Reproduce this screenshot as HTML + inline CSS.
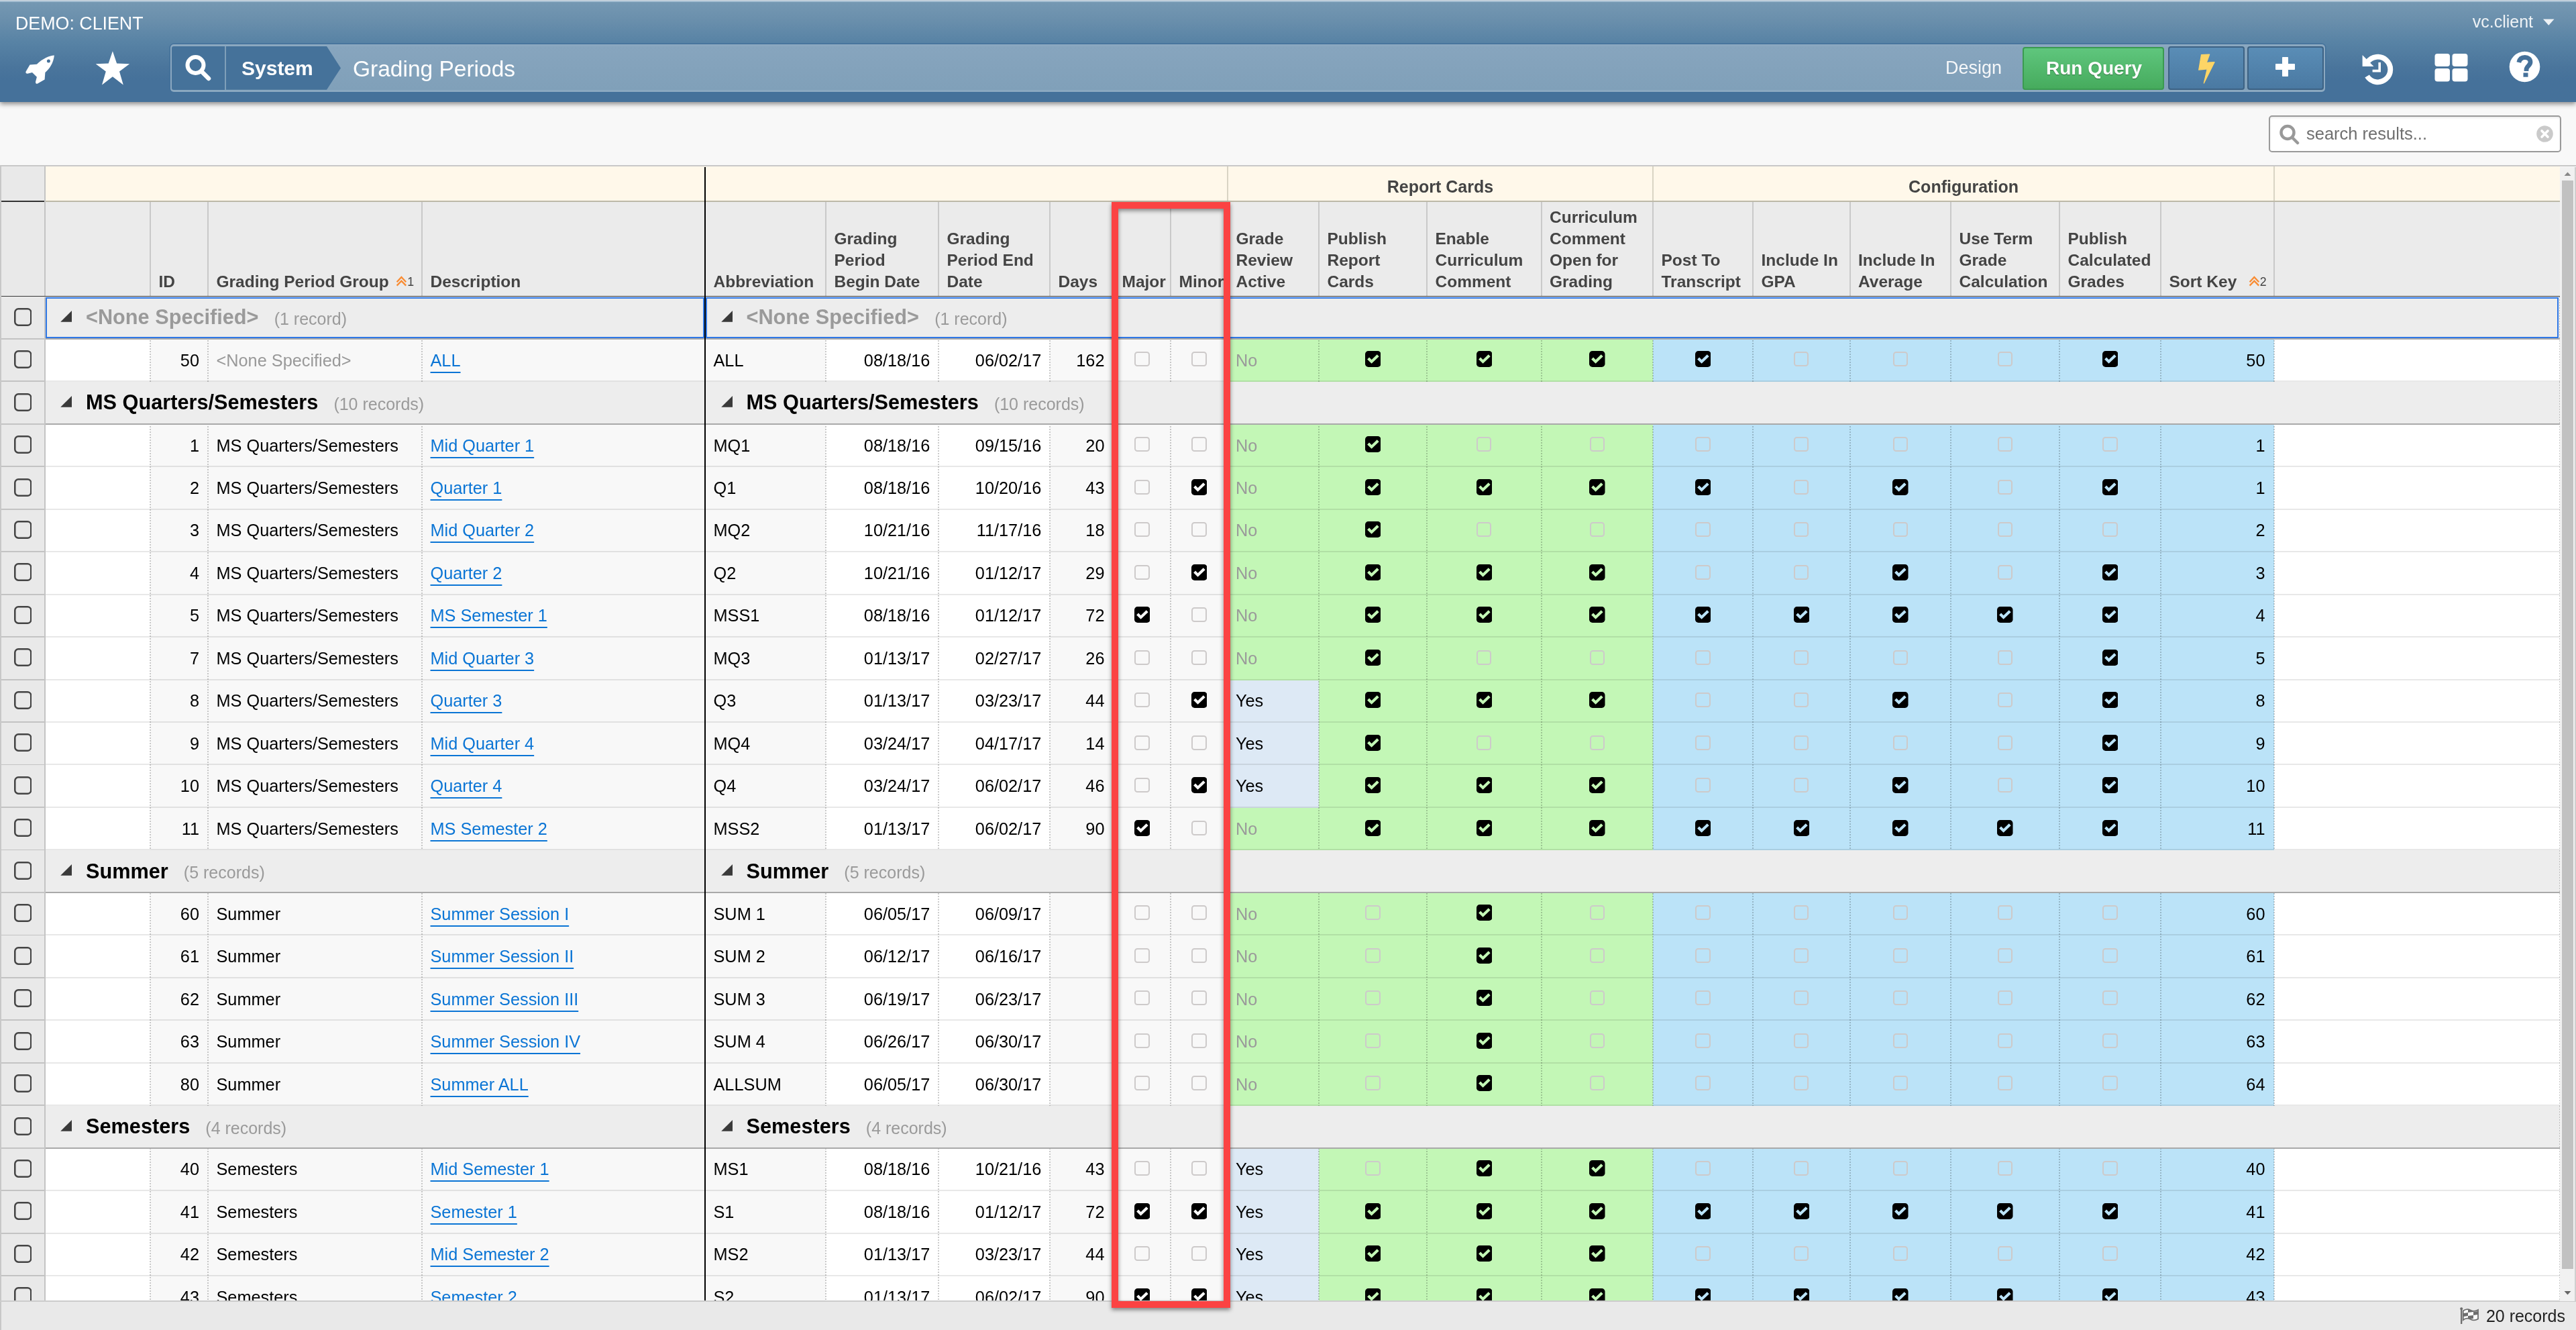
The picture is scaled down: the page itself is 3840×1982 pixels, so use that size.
<!DOCTYPE html>
<html><head><meta charset="utf-8"><style>
html,body{margin:0;padding:0;}
body{width:3840px;height:1982px;overflow:hidden;position:relative;background:#f8f8f8;font-family:"Liberation Sans", sans-serif;-webkit-font-smoothing:antialiased;}
#root{position:absolute;left:0;top:0;width:3840px;height:1982px;will-change:transform;}
</style></head><body><div id="root">
<div style="position:absolute;left:0;top:0;width:3840px;height:152px;background:linear-gradient(#7699b3 0px,#6a8fac 30px,#5883a5 62px,#4a759c 100px,#45719a 120px,#45719a 152px);box-shadow:0 3px 7px rgba(0,0,0,0.45);"></div>
<div style="position:absolute;left:0px;top:0px;width:3840px;height:1.4px;background:#d3dae1;"></div>
<div style="position:absolute;left:0px;top:1.4px;width:3840px;height:1.8px;background:#a6bed2;"></div>
<div style="position:absolute;left:23px;top:22.21px;font-size:26.8px;line-height:26.8px;font-weight:normal;color:#ffffff;white-space:nowrap;">DEMO: CLIENT</div>
<div style="position:absolute;left:2776px;width:1000px;text-align:right;top:20.44px;font-size:25px;line-height:25px;font-weight:normal;color:#eef2f5;white-space:nowrap;">vc.client</div>
<svg style="position:absolute;left:3791px;top:28px" width="17" height="11"><polygon points="0,0.5 16.5,0.5 8.25,9.8" fill="#eef2f5"/></svg>
<svg style="position:absolute;left:36px;top:80px" width="48" height="48" viewBox="0 0 48 48">
<path fill="#fff" d="M44.9 2.5 C38 2.9 27.5 7.2 18.9 15.7 L8.5 16.5 L2.5 26.8 Q1.8 29.6 5 29.7 L12 28.1 L18.9 34.7 L17 42 Q17 45.2 19.7 44.8 L30.6 38.6 L31.4 28.1 C38 22.5 43.8 13.5 44.9 2.5 Z"/>
<circle cx="36.4" cy="11.1" r="2.5" fill="#45719a"/>
</svg>
<svg style="position:absolute;left:141px;top:75px" width="54" height="53" viewBox="0 0 54 53"><polygon fill="#fff" points="26.9,1.3 33.1,19.5 52.1,20.3 37,31.6 42.8,51.4 26.9,39.3 11,51.4 16.8,31.6 1.7,20.3 20.7,19.5"/></svg>
<div style="position:absolute;left:254px;top:66px;width:3212px;height:71px;border-radius:5px;background:#8ba8c0;box-shadow:0 0 0 1.4px #42709a;"></div>
<div style="position:absolute;left:256px;top:69px;width:3208px;height:65px;border-radius:3px;background:linear-gradient(#87a5be,#80a0b9);"></div>
<div style="position:absolute;left:256px;top:69px;width:79px;height:64.75px;border-radius:3px 0 0 3px;background:#45729a;"></div>
<div style="position:absolute;left:335px;top:69px;width:2px;height:64.75px;background:#7f9fb9;"></div>
<svg style="position:absolute;left:337px;top:69px" width="172" height="65"><polygon points="0,0 150,0 171,32.4 150,64.75 0,64.75" fill="#45729a"/></svg>
<svg style="position:absolute;left:274px;top:80px" width="44" height="44" viewBox="0 0 44 44"><circle cx="17.5" cy="17" r="12" fill="none" stroke="#fff" stroke-width="6"/><line x1="27" y1="27" x2="37" y2="37" stroke="#fff" stroke-width="6.5" stroke-linecap="round"/></svg>
<div style="position:absolute;left:360px;top:87.01px;font-size:30px;line-height:30px;font-weight:bold;color:#fff;white-space:nowrap;">System</div>
<div style="position:absolute;left:526px;top:86.44px;font-size:33.5px;line-height:33.5px;font-weight:normal;color:#fff;white-space:nowrap;">Grading Periods</div>
<div style="position:absolute;left:2900px;top:88.14px;font-size:27px;line-height:27px;font-weight:normal;color:#f5f7f9;white-space:nowrap;">Design</div>
<div style="position:absolute;left:3015px;top:69.5px;width:207px;height:60px;border:2px solid #3a9a50;border-radius:4px;background:linear-gradient(#5fc67d,#46ab5d);"></div>
<div style="position:absolute;left:3050px;top:87.90px;font-size:28px;line-height:28px;font-weight:bold;color:#fff;white-space:nowrap;text-shadow:0 1px 1px rgba(0,0,0,0.35);">Run Query</div>
<div style="position:absolute;left:3232px;top:69px;width:110px;height:60.5px;border:2px solid #3d6284;border-radius:4px;background:linear-gradient(#5a8db6,#4a79a2);"></div>
<div style="position:absolute;left:3350px;top:69px;width:110px;height:60.5px;border:2px solid #3d6284;border-radius:4px;background:linear-gradient(#5a8db6,#4a79a2);"></div>
<svg style="position:absolute;left:3275px;top:79px" width="28" height="46" viewBox="0 0 28 46"><polygon fill="#fdd566" stroke="#fdd566" stroke-width="1.2" stroke-linejoin="round" points="6.5,2.6 18.7,2.1 14.3,14.3 26.1,13.5 10.3,45 15.2,23.8 2.7,25.1"/></svg>
<svg style="position:absolute;left:3391px;top:84px" width="31" height="31" viewBox="0 0 31 31"><path fill="#fff" d="M11.5 1.5h8v10h10v8h-10v10h-8v-10h-10v-8h10z" stroke="#fff" stroke-width="1" stroke-linejoin="round"/></svg>
<svg style="position:absolute;left:3519px;top:78px" width="50" height="50" viewBox="0 0 50 50">
<path d="M10 14.8 A18.8 18.8 0 1 1 9.6 35.5" fill="none" stroke="#fff" stroke-width="7.8"/>
<polygon fill="#fff" points="2.6,4 2.6,21 19.5,21"/>
<path d="M28.2 15 V27.6 H17.6" fill="none" stroke="#fff" stroke-width="3.6"/>
</svg>
<svg style="position:absolute;left:3629px;top:80px" width="50" height="42" viewBox="0 0 50 42"><rect x="0.5" y="0" width="22.5" height="19" rx="4" fill="#fff"/><rect x="26.5" y="0" width="23" height="19" rx="4" fill="#fff"/><rect x="0.5" y="22" width="22.5" height="19.5" rx="4" fill="#fff"/><rect x="26.5" y="22" width="23" height="19.5" rx="4" fill="#fff"/></svg>
<svg style="position:absolute;left:3740px;top:76px" width="47" height="47" viewBox="0 0 47 47">
<circle cx="23.5" cy="23.5" r="22.8" fill="#fff"/>
<path d="M14.8 17 C16 11.5 19.5 9.5 23.8 9.5 C28.5 9.5 32 12.2 32 16.5 C32 21.5 26.2 22.5 26 27.5 V30" fill="none" stroke="#45719a" stroke-width="6.8"/>
<rect x="21.5" y="32.5" width="7" height="6.2" fill="#45719a"/>
</svg>
<div style="position:absolute;left:3381.5px;top:171.5px;width:432px;height:51px;border:2px solid #9a9a9a;border-radius:5px;background:#fff;box-shadow:inset 0 2px 3px rgba(0,0,0,0.08);"></div>
<svg style="position:absolute;left:3396px;top:184px" width="34" height="32" viewBox="0 0 34 32"><circle cx="14" cy="13.5" r="9.5" fill="none" stroke="#999" stroke-width="4.5"/><line x1="21" y1="21" x2="29" y2="29" stroke="#999" stroke-width="4.5" stroke-linecap="round"/></svg>
<div style="position:absolute;left:3438px;top:187.41px;font-size:25.5px;line-height:25.5px;font-weight:normal;color:#6f6f6f;white-space:nowrap;">search results...</div>
<svg style="position:absolute;left:3780px;top:186px" width="27" height="27" viewBox="0 0 27 27"><circle cx="13.5" cy="13.5" r="12.3" fill="#cacaca"/><path d="M9 9 L18 18 M18 9 L9 18" stroke="#fff" stroke-width="3.6" stroke-linecap="round"/></svg>
<div style="position:absolute;left:0px;top:245.9px;width:3840px;height:2px;background:#c8c8c8;"></div>
<div style="position:absolute;left:67px;top:247.9px;width:3749px;height:51px;background:#fff8ea;"></div>
<div style="position:absolute;left:0px;top:247.9px;width:67px;height:51px;background:#e9e9e9;"></div>
<div style="position:absolute;left:67px;top:298.7px;width:3749px;height:2px;background:#bdb9a8;"></div>
<div style="position:absolute;left:0px;top:298.7px;width:67px;height:2.2px;background:#333;"></div>
<div style="position:absolute;left:1829px;top:247.9px;width:2px;height:51px;background:#d9d4c4;"></div>
<div style="position:absolute;left:2463px;top:247.9px;width:2px;height:51px;background:#d9d4c4;"></div>
<div style="position:absolute;left:3389px;top:247.9px;width:2px;height:51px;background:#d9d4c4;"></div>
<div style="position:absolute;left:1147px;width:2000px;text-align:center;top:265.84px;font-size:25px;line-height:25px;font-weight:bold;color:#444;white-space:nowrap;">Report Cards</div>
<div style="position:absolute;left:1927px;width:2000px;text-align:center;top:265.84px;font-size:25px;line-height:25px;font-weight:bold;color:#444;white-space:nowrap;">Configuration</div>
<div style="position:absolute;left:0px;top:300.7px;width:3816px;height:140.3px;background:#ebebeb;"></div>
<div style="position:absolute;left:0px;top:300.7px;width:67px;height:140.3px;background:#e9e9e9;"></div>
<div style="position:absolute;left:66px;top:300.7px;width:2px;height:140.3px;background:#c9c9c9;"></div>
<div style="position:absolute;left:223px;top:300.7px;width:2px;height:140.3px;background:#c9c9c9;"></div>
<div style="position:absolute;left:309px;top:300.7px;width:2px;height:140.3px;background:#c9c9c9;"></div>
<div style="position:absolute;left:628px;top:300.7px;width:2px;height:140.3px;background:#c9c9c9;"></div>
<div style="position:absolute;left:1230px;top:300.7px;width:2px;height:140.3px;background:#c9c9c9;"></div>
<div style="position:absolute;left:1398px;top:300.7px;width:2px;height:140.3px;background:#c9c9c9;"></div>
<div style="position:absolute;left:1564px;top:300.7px;width:2px;height:140.3px;background:#c9c9c9;"></div>
<div style="position:absolute;left:1659px;top:300.7px;width:2px;height:140.3px;background:#c9c9c9;"></div>
<div style="position:absolute;left:1744px;top:300.7px;width:2px;height:140.3px;background:#c9c9c9;"></div>
<div style="position:absolute;left:1829px;top:300.7px;width:2px;height:140.3px;background:#c9c9c9;"></div>
<div style="position:absolute;left:1965px;top:300.7px;width:2px;height:140.3px;background:#c9c9c9;"></div>
<div style="position:absolute;left:2126px;top:300.7px;width:2px;height:140.3px;background:#c9c9c9;"></div>
<div style="position:absolute;left:2296.5px;top:300.7px;width:2px;height:140.3px;background:#c9c9c9;"></div>
<div style="position:absolute;left:2463px;top:300.7px;width:2px;height:140.3px;background:#c9c9c9;"></div>
<div style="position:absolute;left:2612px;top:300.7px;width:2px;height:140.3px;background:#c9c9c9;"></div>
<div style="position:absolute;left:2756.5px;top:300.7px;width:2px;height:140.3px;background:#c9c9c9;"></div>
<div style="position:absolute;left:2907px;top:300.7px;width:2px;height:140.3px;background:#c9c9c9;"></div>
<div style="position:absolute;left:3069px;top:300.7px;width:2px;height:140.3px;background:#c9c9c9;"></div>
<div style="position:absolute;left:3220px;top:300.7px;width:2px;height:140.3px;background:#c9c9c9;"></div>
<div style="position:absolute;left:3389px;top:300.7px;width:2px;height:140.3px;background:#c9c9c9;"></div>
<div style="position:absolute;left:0px;top:440.8px;width:3816px;height:2.4px;background:#383838;"></div>
<div style="position:absolute;left:66.25px;top:247.9px;width:1.75px;height:193px;background:#c4c4c4;"></div>
<div style="position:absolute;left:236.5px;top:407.56px;font-size:24.5px;line-height:24.5px;font-weight:bold;color:#444;white-space:nowrap;">ID</div>
<div style="position:absolute;left:322.5px;top:407.56px;font-size:24.5px;line-height:24.5px;font-weight:bold;color:#444;white-space:nowrap;">Grading Period Group</div>
<div style="position:absolute;left:641.5px;top:407.56px;font-size:24.5px;line-height:24.5px;font-weight:bold;color:#444;white-space:nowrap;">Description</div>
<div style="position:absolute;left:1063.5px;top:407.56px;font-size:24.5px;line-height:24.5px;font-weight:bold;color:#444;white-space:nowrap;">Abbreviation</div>
<div style="position:absolute;left:1243.5px;top:343.96px;font-size:24.5px;line-height:24.5px;font-weight:bold;color:#444;white-space:nowrap;">Grading</div>
<div style="position:absolute;left:1243.5px;top:375.76px;font-size:24.5px;line-height:24.5px;font-weight:bold;color:#444;white-space:nowrap;">Period</div>
<div style="position:absolute;left:1243.5px;top:407.56px;font-size:24.5px;line-height:24.5px;font-weight:bold;color:#444;white-space:nowrap;">Begin Date</div>
<div style="position:absolute;left:1411.5px;top:343.96px;font-size:24.5px;line-height:24.5px;font-weight:bold;color:#444;white-space:nowrap;">Grading</div>
<div style="position:absolute;left:1411.5px;top:375.76px;font-size:24.5px;line-height:24.5px;font-weight:bold;color:#444;white-space:nowrap;">Period End</div>
<div style="position:absolute;left:1411.5px;top:407.56px;font-size:24.5px;line-height:24.5px;font-weight:bold;color:#444;white-space:nowrap;">Date</div>
<div style="position:absolute;left:1577.5px;top:407.56px;font-size:24.5px;line-height:24.5px;font-weight:bold;color:#444;white-space:nowrap;">Days</div>
<div style="position:absolute;left:1672.5px;top:407.56px;font-size:24.5px;line-height:24.5px;font-weight:bold;color:#444;white-space:nowrap;">Major</div>
<div style="position:absolute;left:1757.5px;top:407.56px;font-size:24.5px;line-height:24.5px;font-weight:bold;color:#444;white-space:nowrap;">Minor</div>
<div style="position:absolute;left:1842.5px;top:343.96px;font-size:24.5px;line-height:24.5px;font-weight:bold;color:#444;white-space:nowrap;">Grade</div>
<div style="position:absolute;left:1842.5px;top:375.76px;font-size:24.5px;line-height:24.5px;font-weight:bold;color:#444;white-space:nowrap;">Review</div>
<div style="position:absolute;left:1842.5px;top:407.56px;font-size:24.5px;line-height:24.5px;font-weight:bold;color:#444;white-space:nowrap;">Active</div>
<div style="position:absolute;left:1978.5px;top:343.96px;font-size:24.5px;line-height:24.5px;font-weight:bold;color:#444;white-space:nowrap;">Publish</div>
<div style="position:absolute;left:1978.5px;top:375.76px;font-size:24.5px;line-height:24.5px;font-weight:bold;color:#444;white-space:nowrap;">Report</div>
<div style="position:absolute;left:1978.5px;top:407.56px;font-size:24.5px;line-height:24.5px;font-weight:bold;color:#444;white-space:nowrap;">Cards</div>
<div style="position:absolute;left:2139.5px;top:343.96px;font-size:24.5px;line-height:24.5px;font-weight:bold;color:#444;white-space:nowrap;">Enable</div>
<div style="position:absolute;left:2139.5px;top:375.76px;font-size:24.5px;line-height:24.5px;font-weight:bold;color:#444;white-space:nowrap;">Curriculum</div>
<div style="position:absolute;left:2139.5px;top:407.56px;font-size:24.5px;line-height:24.5px;font-weight:bold;color:#444;white-space:nowrap;">Comment</div>
<div style="position:absolute;left:2310.0px;top:312.16px;font-size:24.5px;line-height:24.5px;font-weight:bold;color:#444;white-space:nowrap;">Curriculum</div>
<div style="position:absolute;left:2310.0px;top:343.96px;font-size:24.5px;line-height:24.5px;font-weight:bold;color:#444;white-space:nowrap;">Comment</div>
<div style="position:absolute;left:2310.0px;top:375.76px;font-size:24.5px;line-height:24.5px;font-weight:bold;color:#444;white-space:nowrap;">Open for</div>
<div style="position:absolute;left:2310.0px;top:407.56px;font-size:24.5px;line-height:24.5px;font-weight:bold;color:#444;white-space:nowrap;">Grading</div>
<div style="position:absolute;left:2476.5px;top:375.76px;font-size:24.5px;line-height:24.5px;font-weight:bold;color:#444;white-space:nowrap;">Post To</div>
<div style="position:absolute;left:2476.5px;top:407.56px;font-size:24.5px;line-height:24.5px;font-weight:bold;color:#444;white-space:nowrap;">Transcript</div>
<div style="position:absolute;left:2625.5px;top:375.76px;font-size:24.5px;line-height:24.5px;font-weight:bold;color:#444;white-space:nowrap;">Include In</div>
<div style="position:absolute;left:2625.5px;top:407.56px;font-size:24.5px;line-height:24.5px;font-weight:bold;color:#444;white-space:nowrap;">GPA</div>
<div style="position:absolute;left:2770.0px;top:375.76px;font-size:24.5px;line-height:24.5px;font-weight:bold;color:#444;white-space:nowrap;">Include In</div>
<div style="position:absolute;left:2770.0px;top:407.56px;font-size:24.5px;line-height:24.5px;font-weight:bold;color:#444;white-space:nowrap;">Average</div>
<div style="position:absolute;left:2920.5px;top:343.96px;font-size:24.5px;line-height:24.5px;font-weight:bold;color:#444;white-space:nowrap;">Use Term</div>
<div style="position:absolute;left:2920.5px;top:375.76px;font-size:24.5px;line-height:24.5px;font-weight:bold;color:#444;white-space:nowrap;">Grade</div>
<div style="position:absolute;left:2920.5px;top:407.56px;font-size:24.5px;line-height:24.5px;font-weight:bold;color:#444;white-space:nowrap;">Calculation</div>
<div style="position:absolute;left:3082.5px;top:343.96px;font-size:24.5px;line-height:24.5px;font-weight:bold;color:#444;white-space:nowrap;">Publish</div>
<div style="position:absolute;left:3082.5px;top:375.76px;font-size:24.5px;line-height:24.5px;font-weight:bold;color:#444;white-space:nowrap;">Calculated</div>
<div style="position:absolute;left:3082.5px;top:407.56px;font-size:24.5px;line-height:24.5px;font-weight:bold;color:#444;white-space:nowrap;">Grades</div>
<div style="position:absolute;left:3233.5px;top:407.56px;font-size:24.5px;line-height:24.5px;font-weight:bold;color:#444;white-space:nowrap;">Sort Key</div>
<svg style="position:absolute;left:590px;top:411px" width="17" height="17" viewBox="0 0 17 17"><path d="M1.6 9.2 L8.4 1.9 L15.2 9.2 M1.6 14.6 L8.4 7.6 L15.2 14.6" fill="none" stroke="#f98c33" stroke-width="2.3"/></svg>
<div style="position:absolute;left:607.2px;top:411.73px;font-size:17.8px;line-height:17.8px;font-weight:normal;color:#444;white-space:nowrap;">1</div>
<svg style="position:absolute;left:3351.5px;top:411px" width="17" height="17" viewBox="0 0 17 17"><path d="M1.6 9.2 L8.4 1.9 L15.2 9.2 M1.6 14.6 L8.4 7.6 L15.2 14.6" fill="none" stroke="#f98c33" stroke-width="2.3"/></svg>
<div style="position:absolute;left:3368.7px;top:411.73px;font-size:17.8px;line-height:17.8px;font-weight:normal;color:#444;white-space:nowrap;">2</div>
<div style="position:absolute;left:0;top:0;width:3817.5px;height:1938px;overflow:hidden;">
<div style="position:absolute;left:67px;top:505.79699999999997px;width:157px;height:63.46700000000004px;background:#fff;"></div>
<div style="position:absolute;left:224px;top:505.79699999999997px;width:86px;height:63.46700000000004px;background:#f8f8f8;"></div>
<div style="position:absolute;left:310px;top:505.79699999999997px;width:319px;height:63.46700000000004px;background:#f8f8f8;"></div>
<div style="position:absolute;left:629px;top:505.79699999999997px;width:422px;height:63.46700000000004px;background:#f8f8f8;"></div>
<div style="position:absolute;left:1051px;top:505.79699999999997px;width:180px;height:63.46700000000004px;background:#f8f8f8;"></div>
<div style="position:absolute;left:1231px;top:505.79699999999997px;width:168px;height:63.46700000000004px;background:#fff;"></div>
<div style="position:absolute;left:1399px;top:505.79699999999997px;width:166px;height:63.46700000000004px;background:#fff;"></div>
<div style="position:absolute;left:1565px;top:505.79699999999997px;width:95px;height:63.46700000000004px;background:#f8f8f8;"></div>
<div style="position:absolute;left:1660px;top:505.79699999999997px;width:85px;height:63.46700000000004px;background:#f8f8f8;"></div>
<div style="position:absolute;left:1745px;top:505.79699999999997px;width:85px;height:63.46700000000004px;background:#f8f8f8;"></div>
<div style="position:absolute;left:1830px;top:505.79699999999997px;width:136px;height:63.46700000000004px;background:#c3f7b6;"></div>
<div style="position:absolute;left:1966px;top:505.79699999999997px;width:161px;height:63.46700000000004px;background:#c3f7b6;"></div>
<div style="position:absolute;left:2127px;top:505.79699999999997px;width:170.5px;height:63.46700000000004px;background:#c3f7b6;"></div>
<div style="position:absolute;left:2297.5px;top:505.79699999999997px;width:166.5px;height:63.46700000000004px;background:#c3f7b6;"></div>
<div style="position:absolute;left:2464px;top:505.79699999999997px;width:149px;height:63.46700000000004px;background:#bbe3f8;"></div>
<div style="position:absolute;left:2613px;top:505.79699999999997px;width:144.5px;height:63.46700000000004px;background:#bbe3f8;"></div>
<div style="position:absolute;left:2757.5px;top:505.79699999999997px;width:150.5px;height:63.46700000000004px;background:#bbe3f8;"></div>
<div style="position:absolute;left:2908px;top:505.79699999999997px;width:162px;height:63.46700000000004px;background:#bbe3f8;"></div>
<div style="position:absolute;left:3070px;top:505.79699999999997px;width:151px;height:63.46700000000004px;background:#bbe3f8;"></div>
<div style="position:absolute;left:3221px;top:505.79699999999997px;width:169px;height:63.46700000000004px;background:#bbe3f8;"></div>
<div style="position:absolute;left:3390px;top:505.79699999999997px;width:426px;height:63.46700000000004px;background:#fff;"></div>
<div style="position:absolute;left:67px;top:567.264px;width:3749px;height:2px;background:rgba(0,0,0,0.09);"></div>
<div style="position:absolute;left:67px;top:632.731px;width:157px;height:63.466999999999985px;background:#fff;"></div>
<div style="position:absolute;left:224px;top:632.731px;width:86px;height:63.466999999999985px;background:#f8f8f8;"></div>
<div style="position:absolute;left:310px;top:632.731px;width:319px;height:63.466999999999985px;background:#f8f8f8;"></div>
<div style="position:absolute;left:629px;top:632.731px;width:422px;height:63.466999999999985px;background:#f8f8f8;"></div>
<div style="position:absolute;left:1051px;top:632.731px;width:180px;height:63.466999999999985px;background:#f8f8f8;"></div>
<div style="position:absolute;left:1231px;top:632.731px;width:168px;height:63.466999999999985px;background:#fff;"></div>
<div style="position:absolute;left:1399px;top:632.731px;width:166px;height:63.466999999999985px;background:#fff;"></div>
<div style="position:absolute;left:1565px;top:632.731px;width:95px;height:63.466999999999985px;background:#f8f8f8;"></div>
<div style="position:absolute;left:1660px;top:632.731px;width:85px;height:63.466999999999985px;background:#f8f8f8;"></div>
<div style="position:absolute;left:1745px;top:632.731px;width:85px;height:63.466999999999985px;background:#f8f8f8;"></div>
<div style="position:absolute;left:1830px;top:632.731px;width:136px;height:63.466999999999985px;background:#c3f7b6;"></div>
<div style="position:absolute;left:1966px;top:632.731px;width:161px;height:63.466999999999985px;background:#c3f7b6;"></div>
<div style="position:absolute;left:2127px;top:632.731px;width:170.5px;height:63.466999999999985px;background:#c3f7b6;"></div>
<div style="position:absolute;left:2297.5px;top:632.731px;width:166.5px;height:63.466999999999985px;background:#c3f7b6;"></div>
<div style="position:absolute;left:2464px;top:632.731px;width:149px;height:63.466999999999985px;background:#bbe3f8;"></div>
<div style="position:absolute;left:2613px;top:632.731px;width:144.5px;height:63.466999999999985px;background:#bbe3f8;"></div>
<div style="position:absolute;left:2757.5px;top:632.731px;width:150.5px;height:63.466999999999985px;background:#bbe3f8;"></div>
<div style="position:absolute;left:2908px;top:632.731px;width:162px;height:63.466999999999985px;background:#bbe3f8;"></div>
<div style="position:absolute;left:3070px;top:632.731px;width:151px;height:63.466999999999985px;background:#bbe3f8;"></div>
<div style="position:absolute;left:3221px;top:632.731px;width:169px;height:63.466999999999985px;background:#bbe3f8;"></div>
<div style="position:absolute;left:3390px;top:632.731px;width:426px;height:63.466999999999985px;background:#fff;"></div>
<div style="position:absolute;left:67px;top:694.198px;width:3749px;height:2px;background:rgba(0,0,0,0.09);"></div>
<div style="position:absolute;left:67px;top:696.198px;width:157px;height:63.466999999999985px;background:#fff;"></div>
<div style="position:absolute;left:224px;top:696.198px;width:86px;height:63.466999999999985px;background:#f8f8f8;"></div>
<div style="position:absolute;left:310px;top:696.198px;width:319px;height:63.466999999999985px;background:#f8f8f8;"></div>
<div style="position:absolute;left:629px;top:696.198px;width:422px;height:63.466999999999985px;background:#f8f8f8;"></div>
<div style="position:absolute;left:1051px;top:696.198px;width:180px;height:63.466999999999985px;background:#f8f8f8;"></div>
<div style="position:absolute;left:1231px;top:696.198px;width:168px;height:63.466999999999985px;background:#fff;"></div>
<div style="position:absolute;left:1399px;top:696.198px;width:166px;height:63.466999999999985px;background:#fff;"></div>
<div style="position:absolute;left:1565px;top:696.198px;width:95px;height:63.466999999999985px;background:#f8f8f8;"></div>
<div style="position:absolute;left:1660px;top:696.198px;width:85px;height:63.466999999999985px;background:#f8f8f8;"></div>
<div style="position:absolute;left:1745px;top:696.198px;width:85px;height:63.466999999999985px;background:#f8f8f8;"></div>
<div style="position:absolute;left:1830px;top:696.198px;width:136px;height:63.466999999999985px;background:#c3f7b6;"></div>
<div style="position:absolute;left:1966px;top:696.198px;width:161px;height:63.466999999999985px;background:#c3f7b6;"></div>
<div style="position:absolute;left:2127px;top:696.198px;width:170.5px;height:63.466999999999985px;background:#c3f7b6;"></div>
<div style="position:absolute;left:2297.5px;top:696.198px;width:166.5px;height:63.466999999999985px;background:#c3f7b6;"></div>
<div style="position:absolute;left:2464px;top:696.198px;width:149px;height:63.466999999999985px;background:#bbe3f8;"></div>
<div style="position:absolute;left:2613px;top:696.198px;width:144.5px;height:63.466999999999985px;background:#bbe3f8;"></div>
<div style="position:absolute;left:2757.5px;top:696.198px;width:150.5px;height:63.466999999999985px;background:#bbe3f8;"></div>
<div style="position:absolute;left:2908px;top:696.198px;width:162px;height:63.466999999999985px;background:#bbe3f8;"></div>
<div style="position:absolute;left:3070px;top:696.198px;width:151px;height:63.466999999999985px;background:#bbe3f8;"></div>
<div style="position:absolute;left:3221px;top:696.198px;width:169px;height:63.466999999999985px;background:#bbe3f8;"></div>
<div style="position:absolute;left:3390px;top:696.198px;width:426px;height:63.466999999999985px;background:#fff;"></div>
<div style="position:absolute;left:67px;top:757.665px;width:3749px;height:2px;background:rgba(0,0,0,0.09);"></div>
<div style="position:absolute;left:67px;top:759.665px;width:157px;height:63.4670000000001px;background:#fff;"></div>
<div style="position:absolute;left:224px;top:759.665px;width:86px;height:63.4670000000001px;background:#f8f8f8;"></div>
<div style="position:absolute;left:310px;top:759.665px;width:319px;height:63.4670000000001px;background:#f8f8f8;"></div>
<div style="position:absolute;left:629px;top:759.665px;width:422px;height:63.4670000000001px;background:#f8f8f8;"></div>
<div style="position:absolute;left:1051px;top:759.665px;width:180px;height:63.4670000000001px;background:#f8f8f8;"></div>
<div style="position:absolute;left:1231px;top:759.665px;width:168px;height:63.4670000000001px;background:#fff;"></div>
<div style="position:absolute;left:1399px;top:759.665px;width:166px;height:63.4670000000001px;background:#fff;"></div>
<div style="position:absolute;left:1565px;top:759.665px;width:95px;height:63.4670000000001px;background:#f8f8f8;"></div>
<div style="position:absolute;left:1660px;top:759.665px;width:85px;height:63.4670000000001px;background:#f8f8f8;"></div>
<div style="position:absolute;left:1745px;top:759.665px;width:85px;height:63.4670000000001px;background:#f8f8f8;"></div>
<div style="position:absolute;left:1830px;top:759.665px;width:136px;height:63.4670000000001px;background:#c3f7b6;"></div>
<div style="position:absolute;left:1966px;top:759.665px;width:161px;height:63.4670000000001px;background:#c3f7b6;"></div>
<div style="position:absolute;left:2127px;top:759.665px;width:170.5px;height:63.4670000000001px;background:#c3f7b6;"></div>
<div style="position:absolute;left:2297.5px;top:759.665px;width:166.5px;height:63.4670000000001px;background:#c3f7b6;"></div>
<div style="position:absolute;left:2464px;top:759.665px;width:149px;height:63.4670000000001px;background:#bbe3f8;"></div>
<div style="position:absolute;left:2613px;top:759.665px;width:144.5px;height:63.4670000000001px;background:#bbe3f8;"></div>
<div style="position:absolute;left:2757.5px;top:759.665px;width:150.5px;height:63.4670000000001px;background:#bbe3f8;"></div>
<div style="position:absolute;left:2908px;top:759.665px;width:162px;height:63.4670000000001px;background:#bbe3f8;"></div>
<div style="position:absolute;left:3070px;top:759.665px;width:151px;height:63.4670000000001px;background:#bbe3f8;"></div>
<div style="position:absolute;left:3221px;top:759.665px;width:169px;height:63.4670000000001px;background:#bbe3f8;"></div>
<div style="position:absolute;left:3390px;top:759.665px;width:426px;height:63.4670000000001px;background:#fff;"></div>
<div style="position:absolute;left:67px;top:821.1320000000001px;width:3749px;height:2px;background:rgba(0,0,0,0.09);"></div>
<div style="position:absolute;left:67px;top:823.1320000000001px;width:157px;height:63.46699999999987px;background:#fff;"></div>
<div style="position:absolute;left:224px;top:823.1320000000001px;width:86px;height:63.46699999999987px;background:#f8f8f8;"></div>
<div style="position:absolute;left:310px;top:823.1320000000001px;width:319px;height:63.46699999999987px;background:#f8f8f8;"></div>
<div style="position:absolute;left:629px;top:823.1320000000001px;width:422px;height:63.46699999999987px;background:#f8f8f8;"></div>
<div style="position:absolute;left:1051px;top:823.1320000000001px;width:180px;height:63.46699999999987px;background:#f8f8f8;"></div>
<div style="position:absolute;left:1231px;top:823.1320000000001px;width:168px;height:63.46699999999987px;background:#fff;"></div>
<div style="position:absolute;left:1399px;top:823.1320000000001px;width:166px;height:63.46699999999987px;background:#fff;"></div>
<div style="position:absolute;left:1565px;top:823.1320000000001px;width:95px;height:63.46699999999987px;background:#f8f8f8;"></div>
<div style="position:absolute;left:1660px;top:823.1320000000001px;width:85px;height:63.46699999999987px;background:#f8f8f8;"></div>
<div style="position:absolute;left:1745px;top:823.1320000000001px;width:85px;height:63.46699999999987px;background:#f8f8f8;"></div>
<div style="position:absolute;left:1830px;top:823.1320000000001px;width:136px;height:63.46699999999987px;background:#c3f7b6;"></div>
<div style="position:absolute;left:1966px;top:823.1320000000001px;width:161px;height:63.46699999999987px;background:#c3f7b6;"></div>
<div style="position:absolute;left:2127px;top:823.1320000000001px;width:170.5px;height:63.46699999999987px;background:#c3f7b6;"></div>
<div style="position:absolute;left:2297.5px;top:823.1320000000001px;width:166.5px;height:63.46699999999987px;background:#c3f7b6;"></div>
<div style="position:absolute;left:2464px;top:823.1320000000001px;width:149px;height:63.46699999999987px;background:#bbe3f8;"></div>
<div style="position:absolute;left:2613px;top:823.1320000000001px;width:144.5px;height:63.46699999999987px;background:#bbe3f8;"></div>
<div style="position:absolute;left:2757.5px;top:823.1320000000001px;width:150.5px;height:63.46699999999987px;background:#bbe3f8;"></div>
<div style="position:absolute;left:2908px;top:823.1320000000001px;width:162px;height:63.46699999999987px;background:#bbe3f8;"></div>
<div style="position:absolute;left:3070px;top:823.1320000000001px;width:151px;height:63.46699999999987px;background:#bbe3f8;"></div>
<div style="position:absolute;left:3221px;top:823.1320000000001px;width:169px;height:63.46699999999987px;background:#bbe3f8;"></div>
<div style="position:absolute;left:3390px;top:823.1320000000001px;width:426px;height:63.46699999999987px;background:#fff;"></div>
<div style="position:absolute;left:67px;top:884.5989999999999px;width:3749px;height:2px;background:rgba(0,0,0,0.09);"></div>
<div style="position:absolute;left:67px;top:886.5989999999999px;width:157px;height:63.4670000000001px;background:#fff;"></div>
<div style="position:absolute;left:224px;top:886.5989999999999px;width:86px;height:63.4670000000001px;background:#f8f8f8;"></div>
<div style="position:absolute;left:310px;top:886.5989999999999px;width:319px;height:63.4670000000001px;background:#f8f8f8;"></div>
<div style="position:absolute;left:629px;top:886.5989999999999px;width:422px;height:63.4670000000001px;background:#f8f8f8;"></div>
<div style="position:absolute;left:1051px;top:886.5989999999999px;width:180px;height:63.4670000000001px;background:#f8f8f8;"></div>
<div style="position:absolute;left:1231px;top:886.5989999999999px;width:168px;height:63.4670000000001px;background:#fff;"></div>
<div style="position:absolute;left:1399px;top:886.5989999999999px;width:166px;height:63.4670000000001px;background:#fff;"></div>
<div style="position:absolute;left:1565px;top:886.5989999999999px;width:95px;height:63.4670000000001px;background:#f8f8f8;"></div>
<div style="position:absolute;left:1660px;top:886.5989999999999px;width:85px;height:63.4670000000001px;background:#f8f8f8;"></div>
<div style="position:absolute;left:1745px;top:886.5989999999999px;width:85px;height:63.4670000000001px;background:#f8f8f8;"></div>
<div style="position:absolute;left:1830px;top:886.5989999999999px;width:136px;height:63.4670000000001px;background:#c3f7b6;"></div>
<div style="position:absolute;left:1966px;top:886.5989999999999px;width:161px;height:63.4670000000001px;background:#c3f7b6;"></div>
<div style="position:absolute;left:2127px;top:886.5989999999999px;width:170.5px;height:63.4670000000001px;background:#c3f7b6;"></div>
<div style="position:absolute;left:2297.5px;top:886.5989999999999px;width:166.5px;height:63.4670000000001px;background:#c3f7b6;"></div>
<div style="position:absolute;left:2464px;top:886.5989999999999px;width:149px;height:63.4670000000001px;background:#bbe3f8;"></div>
<div style="position:absolute;left:2613px;top:886.5989999999999px;width:144.5px;height:63.4670000000001px;background:#bbe3f8;"></div>
<div style="position:absolute;left:2757.5px;top:886.5989999999999px;width:150.5px;height:63.4670000000001px;background:#bbe3f8;"></div>
<div style="position:absolute;left:2908px;top:886.5989999999999px;width:162px;height:63.4670000000001px;background:#bbe3f8;"></div>
<div style="position:absolute;left:3070px;top:886.5989999999999px;width:151px;height:63.4670000000001px;background:#bbe3f8;"></div>
<div style="position:absolute;left:3221px;top:886.5989999999999px;width:169px;height:63.4670000000001px;background:#bbe3f8;"></div>
<div style="position:absolute;left:3390px;top:886.5989999999999px;width:426px;height:63.4670000000001px;background:#fff;"></div>
<div style="position:absolute;left:67px;top:948.066px;width:3749px;height:2px;background:rgba(0,0,0,0.09);"></div>
<div style="position:absolute;left:67px;top:950.066px;width:157px;height:63.46699999999987px;background:#fff;"></div>
<div style="position:absolute;left:224px;top:950.066px;width:86px;height:63.46699999999987px;background:#f8f8f8;"></div>
<div style="position:absolute;left:310px;top:950.066px;width:319px;height:63.46699999999987px;background:#f8f8f8;"></div>
<div style="position:absolute;left:629px;top:950.066px;width:422px;height:63.46699999999987px;background:#f8f8f8;"></div>
<div style="position:absolute;left:1051px;top:950.066px;width:180px;height:63.46699999999987px;background:#f8f8f8;"></div>
<div style="position:absolute;left:1231px;top:950.066px;width:168px;height:63.46699999999987px;background:#fff;"></div>
<div style="position:absolute;left:1399px;top:950.066px;width:166px;height:63.46699999999987px;background:#fff;"></div>
<div style="position:absolute;left:1565px;top:950.066px;width:95px;height:63.46699999999987px;background:#f8f8f8;"></div>
<div style="position:absolute;left:1660px;top:950.066px;width:85px;height:63.46699999999987px;background:#f8f8f8;"></div>
<div style="position:absolute;left:1745px;top:950.066px;width:85px;height:63.46699999999987px;background:#f8f8f8;"></div>
<div style="position:absolute;left:1830px;top:950.066px;width:136px;height:63.46699999999987px;background:#c3f7b6;"></div>
<div style="position:absolute;left:1966px;top:950.066px;width:161px;height:63.46699999999987px;background:#c3f7b6;"></div>
<div style="position:absolute;left:2127px;top:950.066px;width:170.5px;height:63.46699999999987px;background:#c3f7b6;"></div>
<div style="position:absolute;left:2297.5px;top:950.066px;width:166.5px;height:63.46699999999987px;background:#c3f7b6;"></div>
<div style="position:absolute;left:2464px;top:950.066px;width:149px;height:63.46699999999987px;background:#bbe3f8;"></div>
<div style="position:absolute;left:2613px;top:950.066px;width:144.5px;height:63.46699999999987px;background:#bbe3f8;"></div>
<div style="position:absolute;left:2757.5px;top:950.066px;width:150.5px;height:63.46699999999987px;background:#bbe3f8;"></div>
<div style="position:absolute;left:2908px;top:950.066px;width:162px;height:63.46699999999987px;background:#bbe3f8;"></div>
<div style="position:absolute;left:3070px;top:950.066px;width:151px;height:63.46699999999987px;background:#bbe3f8;"></div>
<div style="position:absolute;left:3221px;top:950.066px;width:169px;height:63.46699999999987px;background:#bbe3f8;"></div>
<div style="position:absolute;left:3390px;top:950.066px;width:426px;height:63.46699999999987px;background:#fff;"></div>
<div style="position:absolute;left:67px;top:1011.5329999999999px;width:3749px;height:2px;background:rgba(0,0,0,0.09);"></div>
<div style="position:absolute;left:67px;top:1013.5329999999999px;width:157px;height:63.4670000000001px;background:#fff;"></div>
<div style="position:absolute;left:224px;top:1013.5329999999999px;width:86px;height:63.4670000000001px;background:#f8f8f8;"></div>
<div style="position:absolute;left:310px;top:1013.5329999999999px;width:319px;height:63.4670000000001px;background:#f8f8f8;"></div>
<div style="position:absolute;left:629px;top:1013.5329999999999px;width:422px;height:63.4670000000001px;background:#f8f8f8;"></div>
<div style="position:absolute;left:1051px;top:1013.5329999999999px;width:180px;height:63.4670000000001px;background:#f8f8f8;"></div>
<div style="position:absolute;left:1231px;top:1013.5329999999999px;width:168px;height:63.4670000000001px;background:#fff;"></div>
<div style="position:absolute;left:1399px;top:1013.5329999999999px;width:166px;height:63.4670000000001px;background:#fff;"></div>
<div style="position:absolute;left:1565px;top:1013.5329999999999px;width:95px;height:63.4670000000001px;background:#f8f8f8;"></div>
<div style="position:absolute;left:1660px;top:1013.5329999999999px;width:85px;height:63.4670000000001px;background:#f8f8f8;"></div>
<div style="position:absolute;left:1745px;top:1013.5329999999999px;width:85px;height:63.4670000000001px;background:#f8f8f8;"></div>
<div style="position:absolute;left:1830px;top:1013.5329999999999px;width:136px;height:63.4670000000001px;background:#dde9f5;"></div>
<div style="position:absolute;left:1966px;top:1013.5329999999999px;width:161px;height:63.4670000000001px;background:#c3f7b6;"></div>
<div style="position:absolute;left:2127px;top:1013.5329999999999px;width:170.5px;height:63.4670000000001px;background:#c3f7b6;"></div>
<div style="position:absolute;left:2297.5px;top:1013.5329999999999px;width:166.5px;height:63.4670000000001px;background:#c3f7b6;"></div>
<div style="position:absolute;left:2464px;top:1013.5329999999999px;width:149px;height:63.4670000000001px;background:#bbe3f8;"></div>
<div style="position:absolute;left:2613px;top:1013.5329999999999px;width:144.5px;height:63.4670000000001px;background:#bbe3f8;"></div>
<div style="position:absolute;left:2757.5px;top:1013.5329999999999px;width:150.5px;height:63.4670000000001px;background:#bbe3f8;"></div>
<div style="position:absolute;left:2908px;top:1013.5329999999999px;width:162px;height:63.4670000000001px;background:#bbe3f8;"></div>
<div style="position:absolute;left:3070px;top:1013.5329999999999px;width:151px;height:63.4670000000001px;background:#bbe3f8;"></div>
<div style="position:absolute;left:3221px;top:1013.5329999999999px;width:169px;height:63.4670000000001px;background:#bbe3f8;"></div>
<div style="position:absolute;left:3390px;top:1013.5329999999999px;width:426px;height:63.4670000000001px;background:#fff;"></div>
<div style="position:absolute;left:67px;top:1075.0px;width:3749px;height:2px;background:rgba(0,0,0,0.09);"></div>
<div style="position:absolute;left:67px;top:1077.0px;width:157px;height:63.46699999999987px;background:#fff;"></div>
<div style="position:absolute;left:224px;top:1077.0px;width:86px;height:63.46699999999987px;background:#f8f8f8;"></div>
<div style="position:absolute;left:310px;top:1077.0px;width:319px;height:63.46699999999987px;background:#f8f8f8;"></div>
<div style="position:absolute;left:629px;top:1077.0px;width:422px;height:63.46699999999987px;background:#f8f8f8;"></div>
<div style="position:absolute;left:1051px;top:1077.0px;width:180px;height:63.46699999999987px;background:#f8f8f8;"></div>
<div style="position:absolute;left:1231px;top:1077.0px;width:168px;height:63.46699999999987px;background:#fff;"></div>
<div style="position:absolute;left:1399px;top:1077.0px;width:166px;height:63.46699999999987px;background:#fff;"></div>
<div style="position:absolute;left:1565px;top:1077.0px;width:95px;height:63.46699999999987px;background:#f8f8f8;"></div>
<div style="position:absolute;left:1660px;top:1077.0px;width:85px;height:63.46699999999987px;background:#f8f8f8;"></div>
<div style="position:absolute;left:1745px;top:1077.0px;width:85px;height:63.46699999999987px;background:#f8f8f8;"></div>
<div style="position:absolute;left:1830px;top:1077.0px;width:136px;height:63.46699999999987px;background:#dde9f5;"></div>
<div style="position:absolute;left:1966px;top:1077.0px;width:161px;height:63.46699999999987px;background:#c3f7b6;"></div>
<div style="position:absolute;left:2127px;top:1077.0px;width:170.5px;height:63.46699999999987px;background:#c3f7b6;"></div>
<div style="position:absolute;left:2297.5px;top:1077.0px;width:166.5px;height:63.46699999999987px;background:#c3f7b6;"></div>
<div style="position:absolute;left:2464px;top:1077.0px;width:149px;height:63.46699999999987px;background:#bbe3f8;"></div>
<div style="position:absolute;left:2613px;top:1077.0px;width:144.5px;height:63.46699999999987px;background:#bbe3f8;"></div>
<div style="position:absolute;left:2757.5px;top:1077.0px;width:150.5px;height:63.46699999999987px;background:#bbe3f8;"></div>
<div style="position:absolute;left:2908px;top:1077.0px;width:162px;height:63.46699999999987px;background:#bbe3f8;"></div>
<div style="position:absolute;left:3070px;top:1077.0px;width:151px;height:63.46699999999987px;background:#bbe3f8;"></div>
<div style="position:absolute;left:3221px;top:1077.0px;width:169px;height:63.46699999999987px;background:#bbe3f8;"></div>
<div style="position:absolute;left:3390px;top:1077.0px;width:426px;height:63.46699999999987px;background:#fff;"></div>
<div style="position:absolute;left:67px;top:1138.4669999999999px;width:3749px;height:2px;background:rgba(0,0,0,0.09);"></div>
<div style="position:absolute;left:67px;top:1140.4669999999999px;width:157px;height:63.4670000000001px;background:#fff;"></div>
<div style="position:absolute;left:224px;top:1140.4669999999999px;width:86px;height:63.4670000000001px;background:#f8f8f8;"></div>
<div style="position:absolute;left:310px;top:1140.4669999999999px;width:319px;height:63.4670000000001px;background:#f8f8f8;"></div>
<div style="position:absolute;left:629px;top:1140.4669999999999px;width:422px;height:63.4670000000001px;background:#f8f8f8;"></div>
<div style="position:absolute;left:1051px;top:1140.4669999999999px;width:180px;height:63.4670000000001px;background:#f8f8f8;"></div>
<div style="position:absolute;left:1231px;top:1140.4669999999999px;width:168px;height:63.4670000000001px;background:#fff;"></div>
<div style="position:absolute;left:1399px;top:1140.4669999999999px;width:166px;height:63.4670000000001px;background:#fff;"></div>
<div style="position:absolute;left:1565px;top:1140.4669999999999px;width:95px;height:63.4670000000001px;background:#f8f8f8;"></div>
<div style="position:absolute;left:1660px;top:1140.4669999999999px;width:85px;height:63.4670000000001px;background:#f8f8f8;"></div>
<div style="position:absolute;left:1745px;top:1140.4669999999999px;width:85px;height:63.4670000000001px;background:#f8f8f8;"></div>
<div style="position:absolute;left:1830px;top:1140.4669999999999px;width:136px;height:63.4670000000001px;background:#dde9f5;"></div>
<div style="position:absolute;left:1966px;top:1140.4669999999999px;width:161px;height:63.4670000000001px;background:#c3f7b6;"></div>
<div style="position:absolute;left:2127px;top:1140.4669999999999px;width:170.5px;height:63.4670000000001px;background:#c3f7b6;"></div>
<div style="position:absolute;left:2297.5px;top:1140.4669999999999px;width:166.5px;height:63.4670000000001px;background:#c3f7b6;"></div>
<div style="position:absolute;left:2464px;top:1140.4669999999999px;width:149px;height:63.4670000000001px;background:#bbe3f8;"></div>
<div style="position:absolute;left:2613px;top:1140.4669999999999px;width:144.5px;height:63.4670000000001px;background:#bbe3f8;"></div>
<div style="position:absolute;left:2757.5px;top:1140.4669999999999px;width:150.5px;height:63.4670000000001px;background:#bbe3f8;"></div>
<div style="position:absolute;left:2908px;top:1140.4669999999999px;width:162px;height:63.4670000000001px;background:#bbe3f8;"></div>
<div style="position:absolute;left:3070px;top:1140.4669999999999px;width:151px;height:63.4670000000001px;background:#bbe3f8;"></div>
<div style="position:absolute;left:3221px;top:1140.4669999999999px;width:169px;height:63.4670000000001px;background:#bbe3f8;"></div>
<div style="position:absolute;left:3390px;top:1140.4669999999999px;width:426px;height:63.4670000000001px;background:#fff;"></div>
<div style="position:absolute;left:67px;top:1201.934px;width:3749px;height:2px;background:rgba(0,0,0,0.09);"></div>
<div style="position:absolute;left:67px;top:1203.934px;width:157px;height:63.4670000000001px;background:#fff;"></div>
<div style="position:absolute;left:224px;top:1203.934px;width:86px;height:63.4670000000001px;background:#f8f8f8;"></div>
<div style="position:absolute;left:310px;top:1203.934px;width:319px;height:63.4670000000001px;background:#f8f8f8;"></div>
<div style="position:absolute;left:629px;top:1203.934px;width:422px;height:63.4670000000001px;background:#f8f8f8;"></div>
<div style="position:absolute;left:1051px;top:1203.934px;width:180px;height:63.4670000000001px;background:#f8f8f8;"></div>
<div style="position:absolute;left:1231px;top:1203.934px;width:168px;height:63.4670000000001px;background:#fff;"></div>
<div style="position:absolute;left:1399px;top:1203.934px;width:166px;height:63.4670000000001px;background:#fff;"></div>
<div style="position:absolute;left:1565px;top:1203.934px;width:95px;height:63.4670000000001px;background:#f8f8f8;"></div>
<div style="position:absolute;left:1660px;top:1203.934px;width:85px;height:63.4670000000001px;background:#f8f8f8;"></div>
<div style="position:absolute;left:1745px;top:1203.934px;width:85px;height:63.4670000000001px;background:#f8f8f8;"></div>
<div style="position:absolute;left:1830px;top:1203.934px;width:136px;height:63.4670000000001px;background:#c3f7b6;"></div>
<div style="position:absolute;left:1966px;top:1203.934px;width:161px;height:63.4670000000001px;background:#c3f7b6;"></div>
<div style="position:absolute;left:2127px;top:1203.934px;width:170.5px;height:63.4670000000001px;background:#c3f7b6;"></div>
<div style="position:absolute;left:2297.5px;top:1203.934px;width:166.5px;height:63.4670000000001px;background:#c3f7b6;"></div>
<div style="position:absolute;left:2464px;top:1203.934px;width:149px;height:63.4670000000001px;background:#bbe3f8;"></div>
<div style="position:absolute;left:2613px;top:1203.934px;width:144.5px;height:63.4670000000001px;background:#bbe3f8;"></div>
<div style="position:absolute;left:2757.5px;top:1203.934px;width:150.5px;height:63.4670000000001px;background:#bbe3f8;"></div>
<div style="position:absolute;left:2908px;top:1203.934px;width:162px;height:63.4670000000001px;background:#bbe3f8;"></div>
<div style="position:absolute;left:3070px;top:1203.934px;width:151px;height:63.4670000000001px;background:#bbe3f8;"></div>
<div style="position:absolute;left:3221px;top:1203.934px;width:169px;height:63.4670000000001px;background:#bbe3f8;"></div>
<div style="position:absolute;left:3390px;top:1203.934px;width:426px;height:63.4670000000001px;background:#fff;"></div>
<div style="position:absolute;left:67px;top:1265.401px;width:3749px;height:2px;background:rgba(0,0,0,0.09);"></div>
<div style="position:absolute;left:67px;top:1330.868px;width:157px;height:63.4670000000001px;background:#fff;"></div>
<div style="position:absolute;left:224px;top:1330.868px;width:86px;height:63.4670000000001px;background:#f8f8f8;"></div>
<div style="position:absolute;left:310px;top:1330.868px;width:319px;height:63.4670000000001px;background:#f8f8f8;"></div>
<div style="position:absolute;left:629px;top:1330.868px;width:422px;height:63.4670000000001px;background:#f8f8f8;"></div>
<div style="position:absolute;left:1051px;top:1330.868px;width:180px;height:63.4670000000001px;background:#f8f8f8;"></div>
<div style="position:absolute;left:1231px;top:1330.868px;width:168px;height:63.4670000000001px;background:#fff;"></div>
<div style="position:absolute;left:1399px;top:1330.868px;width:166px;height:63.4670000000001px;background:#fff;"></div>
<div style="position:absolute;left:1565px;top:1330.868px;width:95px;height:63.4670000000001px;background:#f8f8f8;"></div>
<div style="position:absolute;left:1660px;top:1330.868px;width:85px;height:63.4670000000001px;background:#f8f8f8;"></div>
<div style="position:absolute;left:1745px;top:1330.868px;width:85px;height:63.4670000000001px;background:#f8f8f8;"></div>
<div style="position:absolute;left:1830px;top:1330.868px;width:136px;height:63.4670000000001px;background:#c3f7b6;"></div>
<div style="position:absolute;left:1966px;top:1330.868px;width:161px;height:63.4670000000001px;background:#c3f7b6;"></div>
<div style="position:absolute;left:2127px;top:1330.868px;width:170.5px;height:63.4670000000001px;background:#c3f7b6;"></div>
<div style="position:absolute;left:2297.5px;top:1330.868px;width:166.5px;height:63.4670000000001px;background:#c3f7b6;"></div>
<div style="position:absolute;left:2464px;top:1330.868px;width:149px;height:63.4670000000001px;background:#bbe3f8;"></div>
<div style="position:absolute;left:2613px;top:1330.868px;width:144.5px;height:63.4670000000001px;background:#bbe3f8;"></div>
<div style="position:absolute;left:2757.5px;top:1330.868px;width:150.5px;height:63.4670000000001px;background:#bbe3f8;"></div>
<div style="position:absolute;left:2908px;top:1330.868px;width:162px;height:63.4670000000001px;background:#bbe3f8;"></div>
<div style="position:absolute;left:3070px;top:1330.868px;width:151px;height:63.4670000000001px;background:#bbe3f8;"></div>
<div style="position:absolute;left:3221px;top:1330.868px;width:169px;height:63.4670000000001px;background:#bbe3f8;"></div>
<div style="position:absolute;left:3390px;top:1330.868px;width:426px;height:63.4670000000001px;background:#fff;"></div>
<div style="position:absolute;left:67px;top:1392.335px;width:3749px;height:2px;background:rgba(0,0,0,0.09);"></div>
<div style="position:absolute;left:67px;top:1394.335px;width:157px;height:63.46699999999987px;background:#fff;"></div>
<div style="position:absolute;left:224px;top:1394.335px;width:86px;height:63.46699999999987px;background:#f8f8f8;"></div>
<div style="position:absolute;left:310px;top:1394.335px;width:319px;height:63.46699999999987px;background:#f8f8f8;"></div>
<div style="position:absolute;left:629px;top:1394.335px;width:422px;height:63.46699999999987px;background:#f8f8f8;"></div>
<div style="position:absolute;left:1051px;top:1394.335px;width:180px;height:63.46699999999987px;background:#f8f8f8;"></div>
<div style="position:absolute;left:1231px;top:1394.335px;width:168px;height:63.46699999999987px;background:#fff;"></div>
<div style="position:absolute;left:1399px;top:1394.335px;width:166px;height:63.46699999999987px;background:#fff;"></div>
<div style="position:absolute;left:1565px;top:1394.335px;width:95px;height:63.46699999999987px;background:#f8f8f8;"></div>
<div style="position:absolute;left:1660px;top:1394.335px;width:85px;height:63.46699999999987px;background:#f8f8f8;"></div>
<div style="position:absolute;left:1745px;top:1394.335px;width:85px;height:63.46699999999987px;background:#f8f8f8;"></div>
<div style="position:absolute;left:1830px;top:1394.335px;width:136px;height:63.46699999999987px;background:#c3f7b6;"></div>
<div style="position:absolute;left:1966px;top:1394.335px;width:161px;height:63.46699999999987px;background:#c3f7b6;"></div>
<div style="position:absolute;left:2127px;top:1394.335px;width:170.5px;height:63.46699999999987px;background:#c3f7b6;"></div>
<div style="position:absolute;left:2297.5px;top:1394.335px;width:166.5px;height:63.46699999999987px;background:#c3f7b6;"></div>
<div style="position:absolute;left:2464px;top:1394.335px;width:149px;height:63.46699999999987px;background:#bbe3f8;"></div>
<div style="position:absolute;left:2613px;top:1394.335px;width:144.5px;height:63.46699999999987px;background:#bbe3f8;"></div>
<div style="position:absolute;left:2757.5px;top:1394.335px;width:150.5px;height:63.46699999999987px;background:#bbe3f8;"></div>
<div style="position:absolute;left:2908px;top:1394.335px;width:162px;height:63.46699999999987px;background:#bbe3f8;"></div>
<div style="position:absolute;left:3070px;top:1394.335px;width:151px;height:63.46699999999987px;background:#bbe3f8;"></div>
<div style="position:absolute;left:3221px;top:1394.335px;width:169px;height:63.46699999999987px;background:#bbe3f8;"></div>
<div style="position:absolute;left:3390px;top:1394.335px;width:426px;height:63.46699999999987px;background:#fff;"></div>
<div style="position:absolute;left:67px;top:1455.802px;width:3749px;height:2px;background:rgba(0,0,0,0.09);"></div>
<div style="position:absolute;left:67px;top:1457.802px;width:157px;height:63.4670000000001px;background:#fff;"></div>
<div style="position:absolute;left:224px;top:1457.802px;width:86px;height:63.4670000000001px;background:#f8f8f8;"></div>
<div style="position:absolute;left:310px;top:1457.802px;width:319px;height:63.4670000000001px;background:#f8f8f8;"></div>
<div style="position:absolute;left:629px;top:1457.802px;width:422px;height:63.4670000000001px;background:#f8f8f8;"></div>
<div style="position:absolute;left:1051px;top:1457.802px;width:180px;height:63.4670000000001px;background:#f8f8f8;"></div>
<div style="position:absolute;left:1231px;top:1457.802px;width:168px;height:63.4670000000001px;background:#fff;"></div>
<div style="position:absolute;left:1399px;top:1457.802px;width:166px;height:63.4670000000001px;background:#fff;"></div>
<div style="position:absolute;left:1565px;top:1457.802px;width:95px;height:63.4670000000001px;background:#f8f8f8;"></div>
<div style="position:absolute;left:1660px;top:1457.802px;width:85px;height:63.4670000000001px;background:#f8f8f8;"></div>
<div style="position:absolute;left:1745px;top:1457.802px;width:85px;height:63.4670000000001px;background:#f8f8f8;"></div>
<div style="position:absolute;left:1830px;top:1457.802px;width:136px;height:63.4670000000001px;background:#c3f7b6;"></div>
<div style="position:absolute;left:1966px;top:1457.802px;width:161px;height:63.4670000000001px;background:#c3f7b6;"></div>
<div style="position:absolute;left:2127px;top:1457.802px;width:170.5px;height:63.4670000000001px;background:#c3f7b6;"></div>
<div style="position:absolute;left:2297.5px;top:1457.802px;width:166.5px;height:63.4670000000001px;background:#c3f7b6;"></div>
<div style="position:absolute;left:2464px;top:1457.802px;width:149px;height:63.4670000000001px;background:#bbe3f8;"></div>
<div style="position:absolute;left:2613px;top:1457.802px;width:144.5px;height:63.4670000000001px;background:#bbe3f8;"></div>
<div style="position:absolute;left:2757.5px;top:1457.802px;width:150.5px;height:63.4670000000001px;background:#bbe3f8;"></div>
<div style="position:absolute;left:2908px;top:1457.802px;width:162px;height:63.4670000000001px;background:#bbe3f8;"></div>
<div style="position:absolute;left:3070px;top:1457.802px;width:151px;height:63.4670000000001px;background:#bbe3f8;"></div>
<div style="position:absolute;left:3221px;top:1457.802px;width:169px;height:63.4670000000001px;background:#bbe3f8;"></div>
<div style="position:absolute;left:3390px;top:1457.802px;width:426px;height:63.4670000000001px;background:#fff;"></div>
<div style="position:absolute;left:67px;top:1519.269px;width:3749px;height:2px;background:rgba(0,0,0,0.09);"></div>
<div style="position:absolute;left:67px;top:1521.269px;width:157px;height:63.46699999999987px;background:#fff;"></div>
<div style="position:absolute;left:224px;top:1521.269px;width:86px;height:63.46699999999987px;background:#f8f8f8;"></div>
<div style="position:absolute;left:310px;top:1521.269px;width:319px;height:63.46699999999987px;background:#f8f8f8;"></div>
<div style="position:absolute;left:629px;top:1521.269px;width:422px;height:63.46699999999987px;background:#f8f8f8;"></div>
<div style="position:absolute;left:1051px;top:1521.269px;width:180px;height:63.46699999999987px;background:#f8f8f8;"></div>
<div style="position:absolute;left:1231px;top:1521.269px;width:168px;height:63.46699999999987px;background:#fff;"></div>
<div style="position:absolute;left:1399px;top:1521.269px;width:166px;height:63.46699999999987px;background:#fff;"></div>
<div style="position:absolute;left:1565px;top:1521.269px;width:95px;height:63.46699999999987px;background:#f8f8f8;"></div>
<div style="position:absolute;left:1660px;top:1521.269px;width:85px;height:63.46699999999987px;background:#f8f8f8;"></div>
<div style="position:absolute;left:1745px;top:1521.269px;width:85px;height:63.46699999999987px;background:#f8f8f8;"></div>
<div style="position:absolute;left:1830px;top:1521.269px;width:136px;height:63.46699999999987px;background:#c3f7b6;"></div>
<div style="position:absolute;left:1966px;top:1521.269px;width:161px;height:63.46699999999987px;background:#c3f7b6;"></div>
<div style="position:absolute;left:2127px;top:1521.269px;width:170.5px;height:63.46699999999987px;background:#c3f7b6;"></div>
<div style="position:absolute;left:2297.5px;top:1521.269px;width:166.5px;height:63.46699999999987px;background:#c3f7b6;"></div>
<div style="position:absolute;left:2464px;top:1521.269px;width:149px;height:63.46699999999987px;background:#bbe3f8;"></div>
<div style="position:absolute;left:2613px;top:1521.269px;width:144.5px;height:63.46699999999987px;background:#bbe3f8;"></div>
<div style="position:absolute;left:2757.5px;top:1521.269px;width:150.5px;height:63.46699999999987px;background:#bbe3f8;"></div>
<div style="position:absolute;left:2908px;top:1521.269px;width:162px;height:63.46699999999987px;background:#bbe3f8;"></div>
<div style="position:absolute;left:3070px;top:1521.269px;width:151px;height:63.46699999999987px;background:#bbe3f8;"></div>
<div style="position:absolute;left:3221px;top:1521.269px;width:169px;height:63.46699999999987px;background:#bbe3f8;"></div>
<div style="position:absolute;left:3390px;top:1521.269px;width:426px;height:63.46699999999987px;background:#fff;"></div>
<div style="position:absolute;left:67px;top:1582.7359999999999px;width:3749px;height:2px;background:rgba(0,0,0,0.09);"></div>
<div style="position:absolute;left:67px;top:1584.7359999999999px;width:157px;height:63.4670000000001px;background:#fff;"></div>
<div style="position:absolute;left:224px;top:1584.7359999999999px;width:86px;height:63.4670000000001px;background:#f8f8f8;"></div>
<div style="position:absolute;left:310px;top:1584.7359999999999px;width:319px;height:63.4670000000001px;background:#f8f8f8;"></div>
<div style="position:absolute;left:629px;top:1584.7359999999999px;width:422px;height:63.4670000000001px;background:#f8f8f8;"></div>
<div style="position:absolute;left:1051px;top:1584.7359999999999px;width:180px;height:63.4670000000001px;background:#f8f8f8;"></div>
<div style="position:absolute;left:1231px;top:1584.7359999999999px;width:168px;height:63.4670000000001px;background:#fff;"></div>
<div style="position:absolute;left:1399px;top:1584.7359999999999px;width:166px;height:63.4670000000001px;background:#fff;"></div>
<div style="position:absolute;left:1565px;top:1584.7359999999999px;width:95px;height:63.4670000000001px;background:#f8f8f8;"></div>
<div style="position:absolute;left:1660px;top:1584.7359999999999px;width:85px;height:63.4670000000001px;background:#f8f8f8;"></div>
<div style="position:absolute;left:1745px;top:1584.7359999999999px;width:85px;height:63.4670000000001px;background:#f8f8f8;"></div>
<div style="position:absolute;left:1830px;top:1584.7359999999999px;width:136px;height:63.4670000000001px;background:#c3f7b6;"></div>
<div style="position:absolute;left:1966px;top:1584.7359999999999px;width:161px;height:63.4670000000001px;background:#c3f7b6;"></div>
<div style="position:absolute;left:2127px;top:1584.7359999999999px;width:170.5px;height:63.4670000000001px;background:#c3f7b6;"></div>
<div style="position:absolute;left:2297.5px;top:1584.7359999999999px;width:166.5px;height:63.4670000000001px;background:#c3f7b6;"></div>
<div style="position:absolute;left:2464px;top:1584.7359999999999px;width:149px;height:63.4670000000001px;background:#bbe3f8;"></div>
<div style="position:absolute;left:2613px;top:1584.7359999999999px;width:144.5px;height:63.4670000000001px;background:#bbe3f8;"></div>
<div style="position:absolute;left:2757.5px;top:1584.7359999999999px;width:150.5px;height:63.4670000000001px;background:#bbe3f8;"></div>
<div style="position:absolute;left:2908px;top:1584.7359999999999px;width:162px;height:63.4670000000001px;background:#bbe3f8;"></div>
<div style="position:absolute;left:3070px;top:1584.7359999999999px;width:151px;height:63.4670000000001px;background:#bbe3f8;"></div>
<div style="position:absolute;left:3221px;top:1584.7359999999999px;width:169px;height:63.4670000000001px;background:#bbe3f8;"></div>
<div style="position:absolute;left:3390px;top:1584.7359999999999px;width:426px;height:63.4670000000001px;background:#fff;"></div>
<div style="position:absolute;left:67px;top:1646.203px;width:3749px;height:2px;background:rgba(0,0,0,0.09);"></div>
<div style="position:absolute;left:67px;top:1711.6699999999998px;width:157px;height:63.4670000000001px;background:#fff;"></div>
<div style="position:absolute;left:224px;top:1711.6699999999998px;width:86px;height:63.4670000000001px;background:#f8f8f8;"></div>
<div style="position:absolute;left:310px;top:1711.6699999999998px;width:319px;height:63.4670000000001px;background:#f8f8f8;"></div>
<div style="position:absolute;left:629px;top:1711.6699999999998px;width:422px;height:63.4670000000001px;background:#f8f8f8;"></div>
<div style="position:absolute;left:1051px;top:1711.6699999999998px;width:180px;height:63.4670000000001px;background:#f8f8f8;"></div>
<div style="position:absolute;left:1231px;top:1711.6699999999998px;width:168px;height:63.4670000000001px;background:#fff;"></div>
<div style="position:absolute;left:1399px;top:1711.6699999999998px;width:166px;height:63.4670000000001px;background:#fff;"></div>
<div style="position:absolute;left:1565px;top:1711.6699999999998px;width:95px;height:63.4670000000001px;background:#f8f8f8;"></div>
<div style="position:absolute;left:1660px;top:1711.6699999999998px;width:85px;height:63.4670000000001px;background:#f8f8f8;"></div>
<div style="position:absolute;left:1745px;top:1711.6699999999998px;width:85px;height:63.4670000000001px;background:#f8f8f8;"></div>
<div style="position:absolute;left:1830px;top:1711.6699999999998px;width:136px;height:63.4670000000001px;background:#dde9f5;"></div>
<div style="position:absolute;left:1966px;top:1711.6699999999998px;width:161px;height:63.4670000000001px;background:#c3f7b6;"></div>
<div style="position:absolute;left:2127px;top:1711.6699999999998px;width:170.5px;height:63.4670000000001px;background:#c3f7b6;"></div>
<div style="position:absolute;left:2297.5px;top:1711.6699999999998px;width:166.5px;height:63.4670000000001px;background:#c3f7b6;"></div>
<div style="position:absolute;left:2464px;top:1711.6699999999998px;width:149px;height:63.4670000000001px;background:#bbe3f8;"></div>
<div style="position:absolute;left:2613px;top:1711.6699999999998px;width:144.5px;height:63.4670000000001px;background:#bbe3f8;"></div>
<div style="position:absolute;left:2757.5px;top:1711.6699999999998px;width:150.5px;height:63.4670000000001px;background:#bbe3f8;"></div>
<div style="position:absolute;left:2908px;top:1711.6699999999998px;width:162px;height:63.4670000000001px;background:#bbe3f8;"></div>
<div style="position:absolute;left:3070px;top:1711.6699999999998px;width:151px;height:63.4670000000001px;background:#bbe3f8;"></div>
<div style="position:absolute;left:3221px;top:1711.6699999999998px;width:169px;height:63.4670000000001px;background:#bbe3f8;"></div>
<div style="position:absolute;left:3390px;top:1711.6699999999998px;width:426px;height:63.4670000000001px;background:#fff;"></div>
<div style="position:absolute;left:67px;top:1773.137px;width:3749px;height:2px;background:rgba(0,0,0,0.09);"></div>
<div style="position:absolute;left:67px;top:1775.137px;width:157px;height:63.46699999999987px;background:#fff;"></div>
<div style="position:absolute;left:224px;top:1775.137px;width:86px;height:63.46699999999987px;background:#f8f8f8;"></div>
<div style="position:absolute;left:310px;top:1775.137px;width:319px;height:63.46699999999987px;background:#f8f8f8;"></div>
<div style="position:absolute;left:629px;top:1775.137px;width:422px;height:63.46699999999987px;background:#f8f8f8;"></div>
<div style="position:absolute;left:1051px;top:1775.137px;width:180px;height:63.46699999999987px;background:#f8f8f8;"></div>
<div style="position:absolute;left:1231px;top:1775.137px;width:168px;height:63.46699999999987px;background:#fff;"></div>
<div style="position:absolute;left:1399px;top:1775.137px;width:166px;height:63.46699999999987px;background:#fff;"></div>
<div style="position:absolute;left:1565px;top:1775.137px;width:95px;height:63.46699999999987px;background:#f8f8f8;"></div>
<div style="position:absolute;left:1660px;top:1775.137px;width:85px;height:63.46699999999987px;background:#f8f8f8;"></div>
<div style="position:absolute;left:1745px;top:1775.137px;width:85px;height:63.46699999999987px;background:#f8f8f8;"></div>
<div style="position:absolute;left:1830px;top:1775.137px;width:136px;height:63.46699999999987px;background:#dde9f5;"></div>
<div style="position:absolute;left:1966px;top:1775.137px;width:161px;height:63.46699999999987px;background:#c3f7b6;"></div>
<div style="position:absolute;left:2127px;top:1775.137px;width:170.5px;height:63.46699999999987px;background:#c3f7b6;"></div>
<div style="position:absolute;left:2297.5px;top:1775.137px;width:166.5px;height:63.46699999999987px;background:#c3f7b6;"></div>
<div style="position:absolute;left:2464px;top:1775.137px;width:149px;height:63.46699999999987px;background:#bbe3f8;"></div>
<div style="position:absolute;left:2613px;top:1775.137px;width:144.5px;height:63.46699999999987px;background:#bbe3f8;"></div>
<div style="position:absolute;left:2757.5px;top:1775.137px;width:150.5px;height:63.46699999999987px;background:#bbe3f8;"></div>
<div style="position:absolute;left:2908px;top:1775.137px;width:162px;height:63.46699999999987px;background:#bbe3f8;"></div>
<div style="position:absolute;left:3070px;top:1775.137px;width:151px;height:63.46699999999987px;background:#bbe3f8;"></div>
<div style="position:absolute;left:3221px;top:1775.137px;width:169px;height:63.46699999999987px;background:#bbe3f8;"></div>
<div style="position:absolute;left:3390px;top:1775.137px;width:426px;height:63.46699999999987px;background:#fff;"></div>
<div style="position:absolute;left:67px;top:1836.6039999999998px;width:3749px;height:2px;background:rgba(0,0,0,0.09);"></div>
<div style="position:absolute;left:67px;top:1838.6039999999998px;width:157px;height:63.4670000000001px;background:#fff;"></div>
<div style="position:absolute;left:224px;top:1838.6039999999998px;width:86px;height:63.4670000000001px;background:#f8f8f8;"></div>
<div style="position:absolute;left:310px;top:1838.6039999999998px;width:319px;height:63.4670000000001px;background:#f8f8f8;"></div>
<div style="position:absolute;left:629px;top:1838.6039999999998px;width:422px;height:63.4670000000001px;background:#f8f8f8;"></div>
<div style="position:absolute;left:1051px;top:1838.6039999999998px;width:180px;height:63.4670000000001px;background:#f8f8f8;"></div>
<div style="position:absolute;left:1231px;top:1838.6039999999998px;width:168px;height:63.4670000000001px;background:#fff;"></div>
<div style="position:absolute;left:1399px;top:1838.6039999999998px;width:166px;height:63.4670000000001px;background:#fff;"></div>
<div style="position:absolute;left:1565px;top:1838.6039999999998px;width:95px;height:63.4670000000001px;background:#f8f8f8;"></div>
<div style="position:absolute;left:1660px;top:1838.6039999999998px;width:85px;height:63.4670000000001px;background:#f8f8f8;"></div>
<div style="position:absolute;left:1745px;top:1838.6039999999998px;width:85px;height:63.4670000000001px;background:#f8f8f8;"></div>
<div style="position:absolute;left:1830px;top:1838.6039999999998px;width:136px;height:63.4670000000001px;background:#dde9f5;"></div>
<div style="position:absolute;left:1966px;top:1838.6039999999998px;width:161px;height:63.4670000000001px;background:#c3f7b6;"></div>
<div style="position:absolute;left:2127px;top:1838.6039999999998px;width:170.5px;height:63.4670000000001px;background:#c3f7b6;"></div>
<div style="position:absolute;left:2297.5px;top:1838.6039999999998px;width:166.5px;height:63.4670000000001px;background:#c3f7b6;"></div>
<div style="position:absolute;left:2464px;top:1838.6039999999998px;width:149px;height:63.4670000000001px;background:#bbe3f8;"></div>
<div style="position:absolute;left:2613px;top:1838.6039999999998px;width:144.5px;height:63.4670000000001px;background:#bbe3f8;"></div>
<div style="position:absolute;left:2757.5px;top:1838.6039999999998px;width:150.5px;height:63.4670000000001px;background:#bbe3f8;"></div>
<div style="position:absolute;left:2908px;top:1838.6039999999998px;width:162px;height:63.4670000000001px;background:#bbe3f8;"></div>
<div style="position:absolute;left:3070px;top:1838.6039999999998px;width:151px;height:63.4670000000001px;background:#bbe3f8;"></div>
<div style="position:absolute;left:3221px;top:1838.6039999999998px;width:169px;height:63.4670000000001px;background:#bbe3f8;"></div>
<div style="position:absolute;left:3390px;top:1838.6039999999998px;width:426px;height:63.4670000000001px;background:#fff;"></div>
<div style="position:absolute;left:67px;top:1900.071px;width:3749px;height:2px;background:rgba(0,0,0,0.09);"></div>
<div style="position:absolute;left:67px;top:1902.071px;width:157px;height:63.4670000000001px;background:#fff;"></div>
<div style="position:absolute;left:224px;top:1902.071px;width:86px;height:63.4670000000001px;background:#f8f8f8;"></div>
<div style="position:absolute;left:310px;top:1902.071px;width:319px;height:63.4670000000001px;background:#f8f8f8;"></div>
<div style="position:absolute;left:629px;top:1902.071px;width:422px;height:63.4670000000001px;background:#f8f8f8;"></div>
<div style="position:absolute;left:1051px;top:1902.071px;width:180px;height:63.4670000000001px;background:#f8f8f8;"></div>
<div style="position:absolute;left:1231px;top:1902.071px;width:168px;height:63.4670000000001px;background:#fff;"></div>
<div style="position:absolute;left:1399px;top:1902.071px;width:166px;height:63.4670000000001px;background:#fff;"></div>
<div style="position:absolute;left:1565px;top:1902.071px;width:95px;height:63.4670000000001px;background:#f8f8f8;"></div>
<div style="position:absolute;left:1660px;top:1902.071px;width:85px;height:63.4670000000001px;background:#f8f8f8;"></div>
<div style="position:absolute;left:1745px;top:1902.071px;width:85px;height:63.4670000000001px;background:#f8f8f8;"></div>
<div style="position:absolute;left:1830px;top:1902.071px;width:136px;height:63.4670000000001px;background:#dde9f5;"></div>
<div style="position:absolute;left:1966px;top:1902.071px;width:161px;height:63.4670000000001px;background:#c3f7b6;"></div>
<div style="position:absolute;left:2127px;top:1902.071px;width:170.5px;height:63.4670000000001px;background:#c3f7b6;"></div>
<div style="position:absolute;left:2297.5px;top:1902.071px;width:166.5px;height:63.4670000000001px;background:#c3f7b6;"></div>
<div style="position:absolute;left:2464px;top:1902.071px;width:149px;height:63.4670000000001px;background:#bbe3f8;"></div>
<div style="position:absolute;left:2613px;top:1902.071px;width:144.5px;height:63.4670000000001px;background:#bbe3f8;"></div>
<div style="position:absolute;left:2757.5px;top:1902.071px;width:150.5px;height:63.4670000000001px;background:#bbe3f8;"></div>
<div style="position:absolute;left:2908px;top:1902.071px;width:162px;height:63.4670000000001px;background:#bbe3f8;"></div>
<div style="position:absolute;left:3070px;top:1902.071px;width:151px;height:63.4670000000001px;background:#bbe3f8;"></div>
<div style="position:absolute;left:3221px;top:1902.071px;width:169px;height:63.4670000000001px;background:#bbe3f8;"></div>
<div style="position:absolute;left:3390px;top:1902.071px;width:426px;height:63.4670000000001px;background:#fff;"></div>
<div style="position:absolute;left:67px;top:1963.538px;width:3749px;height:2px;background:rgba(0,0,0,0.09);"></div>
<div style="position:absolute;left:223px;top:443px;width:2px;height:1500px;background:repeating-linear-gradient(to bottom, rgba(0,0,0,0.2) 0px, rgba(0,0,0,0.2) 2px, transparent 2px, transparent 4px);"></div>
<div style="position:absolute;left:309px;top:443px;width:2px;height:1500px;background:repeating-linear-gradient(to bottom, rgba(0,0,0,0.2) 0px, rgba(0,0,0,0.2) 2px, transparent 2px, transparent 4px);"></div>
<div style="position:absolute;left:628px;top:443px;width:2px;height:1500px;background:repeating-linear-gradient(to bottom, rgba(0,0,0,0.2) 0px, rgba(0,0,0,0.2) 2px, transparent 2px, transparent 4px);"></div>
<div style="position:absolute;left:1230px;top:443px;width:2px;height:1500px;background:repeating-linear-gradient(to bottom, rgba(0,0,0,0.2) 0px, rgba(0,0,0,0.2) 2px, transparent 2px, transparent 4px);"></div>
<div style="position:absolute;left:1398px;top:443px;width:2px;height:1500px;background:repeating-linear-gradient(to bottom, rgba(0,0,0,0.2) 0px, rgba(0,0,0,0.2) 2px, transparent 2px, transparent 4px);"></div>
<div style="position:absolute;left:1564px;top:443px;width:2px;height:1500px;background:repeating-linear-gradient(to bottom, rgba(0,0,0,0.2) 0px, rgba(0,0,0,0.2) 2px, transparent 2px, transparent 4px);"></div>
<div style="position:absolute;left:1659px;top:443px;width:2px;height:1500px;background:repeating-linear-gradient(to bottom, rgba(0,0,0,0.2) 0px, rgba(0,0,0,0.2) 2px, transparent 2px, transparent 4px);"></div>
<div style="position:absolute;left:1744px;top:443px;width:2px;height:1500px;background:repeating-linear-gradient(to bottom, rgba(0,0,0,0.2) 0px, rgba(0,0,0,0.2) 2px, transparent 2px, transparent 4px);"></div>
<div style="position:absolute;left:1829px;top:443px;width:2px;height:1500px;background:repeating-linear-gradient(to bottom, rgba(0,0,0,0.2) 0px, rgba(0,0,0,0.2) 2px, transparent 2px, transparent 4px);"></div>
<div style="position:absolute;left:1965px;top:443px;width:2px;height:1500px;background:repeating-linear-gradient(to bottom, rgba(0,0,0,0.2) 0px, rgba(0,0,0,0.2) 2px, transparent 2px, transparent 4px);"></div>
<div style="position:absolute;left:2126px;top:443px;width:2px;height:1500px;background:repeating-linear-gradient(to bottom, rgba(0,0,0,0.2) 0px, rgba(0,0,0,0.2) 2px, transparent 2px, transparent 4px);"></div>
<div style="position:absolute;left:2296.5px;top:443px;width:2px;height:1500px;background:repeating-linear-gradient(to bottom, rgba(0,0,0,0.2) 0px, rgba(0,0,0,0.2) 2px, transparent 2px, transparent 4px);"></div>
<div style="position:absolute;left:2463px;top:443px;width:2px;height:1500px;background:repeating-linear-gradient(to bottom, rgba(0,0,0,0.2) 0px, rgba(0,0,0,0.2) 2px, transparent 2px, transparent 4px);"></div>
<div style="position:absolute;left:2612px;top:443px;width:2px;height:1500px;background:repeating-linear-gradient(to bottom, rgba(0,0,0,0.2) 0px, rgba(0,0,0,0.2) 2px, transparent 2px, transparent 4px);"></div>
<div style="position:absolute;left:2756.5px;top:443px;width:2px;height:1500px;background:repeating-linear-gradient(to bottom, rgba(0,0,0,0.2) 0px, rgba(0,0,0,0.2) 2px, transparent 2px, transparent 4px);"></div>
<div style="position:absolute;left:2907px;top:443px;width:2px;height:1500px;background:repeating-linear-gradient(to bottom, rgba(0,0,0,0.2) 0px, rgba(0,0,0,0.2) 2px, transparent 2px, transparent 4px);"></div>
<div style="position:absolute;left:3069px;top:443px;width:2px;height:1500px;background:repeating-linear-gradient(to bottom, rgba(0,0,0,0.2) 0px, rgba(0,0,0,0.2) 2px, transparent 2px, transparent 4px);"></div>
<div style="position:absolute;left:3220px;top:443px;width:2px;height:1500px;background:repeating-linear-gradient(to bottom, rgba(0,0,0,0.2) 0px, rgba(0,0,0,0.2) 2px, transparent 2px, transparent 4px);"></div>
<div style="position:absolute;left:3389px;top:443px;width:2px;height:1500px;background:repeating-linear-gradient(to bottom, rgba(0,0,0,0.2) 0px, rgba(0,0,0,0.2) 2px, transparent 2px, transparent 4px);"></div>
<div style="position:absolute;left:3815px;top:443px;width:2px;height:1500px;background:repeating-linear-gradient(to bottom, rgba(0,0,0,0.2) 0px, rgba(0,0,0,0.2) 2px, transparent 2px, transparent 4px);"></div>
<div style="position:absolute;left:0px;top:442.33px;width:67px;height:63.466999999999985px;background:#e9e9e9;"></div>
<div style="position:absolute;left:0px;top:503.99699999999996px;width:67px;height:1.8px;background:#c3c3c3;"></div>
<svg style="position:absolute;left:20.9px;top:458.63px" width="26.5" height="27"><rect x="1.25" y="1.25" width="24" height="24.4" rx="5.2" fill="none" stroke="#444" stroke-width="2.5"/></svg>
<div style="position:absolute;left:67px;top:442.33px;width:3749px;height:63.466999999999985px;background:#ededed;"></div>
<div style="position:absolute;left:67px;top:503.79699999999997px;width:3749px;height:2px;background:#a9a9a9;"></div>
<div style="position:absolute;left:3815px;top:442.33px;width:2px;height:61.466999999999985px;background:repeating-linear-gradient(to bottom, rgba(0,0,0,0.2) 0px, rgba(0,0,0,0.2) 2px, transparent 2px, transparent 4px);"></div>
<svg style="position:absolute;left:90px;top:463.23px" width="18" height="18"><polygon points="17,0 17,16.8 0.2,16.8" fill="#3a3a3a"/></svg>
<div style="position:absolute;left:128px;top:458.44px;font-size:30.7px;line-height:30.7px;font-weight:bold;color:#9a9a9a;white-space:nowrap;">&lt;None Specified&gt;</div>
<svg style="position:absolute;left:1074.5px;top:463.23px" width="18" height="18"><polygon points="17,0 17,16.8 0.2,16.8" fill="#3a3a3a"/></svg>
<div style="position:absolute;left:1112.5px;top:458.44px;font-size:30.7px;line-height:30.7px;font-weight:bold;color:#9a9a9a;white-space:nowrap;">&lt;None Specified&gt;</div>
<div style="position:absolute;left:408.62519px;top:463.27px;font-size:25px;line-height:25px;font-weight:normal;color:#9a9a9a;white-space:nowrap;">(1 record)</div>
<div style="position:absolute;left:1393.12519px;top:463.27px;font-size:25px;line-height:25px;font-weight:normal;color:#9a9a9a;white-space:nowrap;">(1 record)</div>
<div style="position:absolute;left:0px;top:505.79699999999997px;width:67px;height:63.46700000000004px;background:#e9e9e9;"></div>
<div style="position:absolute;left:0px;top:567.464px;width:67px;height:1.8px;background:#c3c3c3;"></div>
<svg style="position:absolute;left:20.9px;top:522.10px" width="26.5" height="27"><rect x="1.25" y="1.25" width="24" height="24.4" rx="5.2" fill="none" stroke="#444" stroke-width="2.5"/></svg>
<div style="position:absolute;left:-703px;width:1000px;text-align:right;top:524.58px;font-size:25.3px;line-height:25.3px;font-weight:normal;color:#000;white-space:nowrap;">50</div>
<div style="position:absolute;left:322.5px;top:524.58px;font-size:25.3px;line-height:25.3px;font-weight:normal;color:#999;white-space:nowrap;">&lt;None Specified&gt;</div>
<div style="position:absolute;left:641.5px;top:524.58px;font-size:25.3px;line-height:25.3px;font-weight:normal;color:#0b75d5;white-space:nowrap;text-decoration:underline;text-decoration-thickness:2px;text-underline-offset:8px;">ALL</div>
<div style="position:absolute;left:1063.5px;top:524.58px;font-size:25.3px;line-height:25.3px;font-weight:normal;color:#000;white-space:nowrap;">ALL</div>
<div style="position:absolute;left:386.29999999999995px;width:1000px;text-align:right;top:524.58px;font-size:25.3px;line-height:25.3px;font-weight:normal;color:#000;white-space:nowrap;">08/18/16</div>
<div style="position:absolute;left:552.3px;width:1000px;text-align:right;top:524.58px;font-size:25.3px;line-height:25.3px;font-weight:normal;color:#000;white-space:nowrap;">06/02/17</div>
<div style="position:absolute;left:646.5px;width:1000px;text-align:right;top:524.58px;font-size:25.3px;line-height:25.3px;font-weight:normal;color:#000;white-space:nowrap;">162</div>
<div style="position:absolute;left:1842px;top:524.58px;font-size:25.3px;line-height:25.3px;font-weight:normal;color:#9a9a9a;white-space:nowrap;">No</div>
<div style="position:absolute;left:2376.5px;width:1000px;text-align:right;top:524.58px;font-size:25.3px;line-height:25.3px;font-weight:normal;color:#000;white-space:nowrap;">50</div>
<div style="position:absolute;left:1691.30px;top:524.40px;width:18.4px;height:18px;border:2px solid #cdcaca;border-radius:4.5px;"></div>
<div style="position:absolute;left:1776.30px;top:524.40px;width:18.4px;height:18px;border:2px solid #cdcaca;border-radius:4.5px;"></div>
<svg style="position:absolute;left:2034.75px;top:523.40px" width="23.5" height="24" viewBox="0 0 23.5 24"><rect x="0" y="0" width="23.5" height="24" rx="4.8" fill="#000"/><path d="M4.6 11.0 L9.6 15.9 L19.2 6.7" fill="none" stroke="#c3f7b6" stroke-width="4.2"/></svg>
<svg style="position:absolute;left:2200.50px;top:523.40px" width="23.5" height="24" viewBox="0 0 23.5 24"><rect x="0" y="0" width="23.5" height="24" rx="4.8" fill="#000"/><path d="M4.6 11.0 L9.6 15.9 L19.2 6.7" fill="none" stroke="#c3f7b6" stroke-width="4.2"/></svg>
<svg style="position:absolute;left:2369.00px;top:523.40px" width="23.5" height="24" viewBox="0 0 23.5 24"><rect x="0" y="0" width="23.5" height="24" rx="4.8" fill="#000"/><path d="M4.6 11.0 L9.6 15.9 L19.2 6.7" fill="none" stroke="#c3f7b6" stroke-width="4.2"/></svg>
<svg style="position:absolute;left:2526.75px;top:523.40px" width="23.5" height="24" viewBox="0 0 23.5 24"><rect x="0" y="0" width="23.5" height="24" rx="4.8" fill="#000"/><path d="M4.6 11.0 L9.6 15.9 L19.2 6.7" fill="none" stroke="#bbe3f8" stroke-width="4.2"/></svg>
<div style="position:absolute;left:2674.05px;top:524.40px;width:18.4px;height:18px;border:2px solid #cdcaca;border-radius:4.5px;"></div>
<div style="position:absolute;left:2821.55px;top:524.40px;width:18.4px;height:18px;border:2px solid #cdcaca;border-radius:4.5px;"></div>
<div style="position:absolute;left:2977.80px;top:524.40px;width:18.4px;height:18px;border:2px solid #cdcaca;border-radius:4.5px;"></div>
<svg style="position:absolute;left:3133.75px;top:523.40px" width="23.5" height="24" viewBox="0 0 23.5 24"><rect x="0" y="0" width="23.5" height="24" rx="4.8" fill="#000"/><path d="M4.6 11.0 L9.6 15.9 L19.2 6.7" fill="none" stroke="#bbe3f8" stroke-width="4.2"/></svg>
<div style="position:absolute;left:0px;top:569.264px;width:67px;height:63.466999999999985px;background:#e9e9e9;"></div>
<div style="position:absolute;left:0px;top:630.931px;width:67px;height:1.8px;background:#c3c3c3;"></div>
<svg style="position:absolute;left:20.9px;top:585.56px" width="26.5" height="27"><rect x="1.25" y="1.25" width="24" height="24.4" rx="5.2" fill="none" stroke="#444" stroke-width="2.5"/></svg>
<div style="position:absolute;left:67px;top:569.264px;width:3749px;height:63.466999999999985px;background:#ededed;"></div>
<div style="position:absolute;left:67px;top:630.731px;width:3749px;height:2px;background:#a9a9a9;"></div>
<div style="position:absolute;left:3815px;top:569.264px;width:2px;height:61.466999999999985px;background:repeating-linear-gradient(to bottom, rgba(0,0,0,0.2) 0px, rgba(0,0,0,0.2) 2px, transparent 2px, transparent 4px);"></div>
<svg style="position:absolute;left:90px;top:590.16px" width="18" height="18"><polygon points="17,0 17,16.8 0.2,16.8" fill="#3a3a3a"/></svg>
<div style="position:absolute;left:128px;top:585.38px;font-size:30.7px;line-height:30.7px;font-weight:bold;color:#000;white-space:nowrap;">MS Quarters/Semesters</div>
<svg style="position:absolute;left:1074.5px;top:590.16px" width="18" height="18"><polygon points="17,0 17,16.8 0.2,16.8" fill="#3a3a3a"/></svg>
<div style="position:absolute;left:1112.5px;top:585.38px;font-size:30.7px;line-height:30.7px;font-weight:bold;color:#000;white-space:nowrap;">MS Quarters/Semesters</div>
<div style="position:absolute;left:497.39731px;top:590.20px;font-size:25px;line-height:25px;font-weight:normal;color:#9a9a9a;white-space:nowrap;">(10 records)</div>
<div style="position:absolute;left:1481.89731px;top:590.20px;font-size:25px;line-height:25px;font-weight:normal;color:#9a9a9a;white-space:nowrap;">(10 records)</div>
<div style="position:absolute;left:0px;top:632.731px;width:67px;height:63.466999999999985px;background:#e9e9e9;"></div>
<div style="position:absolute;left:0px;top:694.398px;width:67px;height:1.8px;background:#c3c3c3;"></div>
<svg style="position:absolute;left:20.9px;top:649.03px" width="26.5" height="27"><rect x="1.25" y="1.25" width="24" height="24.4" rx="5.2" fill="none" stroke="#444" stroke-width="2.5"/></svg>
<div style="position:absolute;left:-703px;width:1000px;text-align:right;top:651.51px;font-size:25.3px;line-height:25.3px;font-weight:normal;color:#000;white-space:nowrap;">1</div>
<div style="position:absolute;left:322.5px;top:651.51px;font-size:25.3px;line-height:25.3px;font-weight:normal;color:#000;white-space:nowrap;">MS Quarters/Semesters</div>
<div style="position:absolute;left:641.5px;top:651.51px;font-size:25.3px;line-height:25.3px;font-weight:normal;color:#0b75d5;white-space:nowrap;text-decoration:underline;text-decoration-thickness:2px;text-underline-offset:8px;">Mid Quarter 1</div>
<div style="position:absolute;left:1063.5px;top:651.51px;font-size:25.3px;line-height:25.3px;font-weight:normal;color:#000;white-space:nowrap;">MQ1</div>
<div style="position:absolute;left:386.29999999999995px;width:1000px;text-align:right;top:651.51px;font-size:25.3px;line-height:25.3px;font-weight:normal;color:#000;white-space:nowrap;">08/18/16</div>
<div style="position:absolute;left:552.3px;width:1000px;text-align:right;top:651.51px;font-size:25.3px;line-height:25.3px;font-weight:normal;color:#000;white-space:nowrap;">09/15/16</div>
<div style="position:absolute;left:646.5px;width:1000px;text-align:right;top:651.51px;font-size:25.3px;line-height:25.3px;font-weight:normal;color:#000;white-space:nowrap;">20</div>
<div style="position:absolute;left:1842px;top:651.51px;font-size:25.3px;line-height:25.3px;font-weight:normal;color:#9a9a9a;white-space:nowrap;">No</div>
<div style="position:absolute;left:2376.5px;width:1000px;text-align:right;top:651.51px;font-size:25.3px;line-height:25.3px;font-weight:normal;color:#000;white-space:nowrap;">1</div>
<div style="position:absolute;left:1691.30px;top:651.33px;width:18.4px;height:18px;border:2px solid #cdcaca;border-radius:4.5px;"></div>
<div style="position:absolute;left:1776.30px;top:651.33px;width:18.4px;height:18px;border:2px solid #cdcaca;border-radius:4.5px;"></div>
<svg style="position:absolute;left:2034.75px;top:650.33px" width="23.5" height="24" viewBox="0 0 23.5 24"><rect x="0" y="0" width="23.5" height="24" rx="4.8" fill="#000"/><path d="M4.6 11.0 L9.6 15.9 L19.2 6.7" fill="none" stroke="#c3f7b6" stroke-width="4.2"/></svg>
<div style="position:absolute;left:2201.05px;top:651.33px;width:18.4px;height:18px;border:2px solid #cdcaca;border-radius:4.5px;"></div>
<div style="position:absolute;left:2369.55px;top:651.33px;width:18.4px;height:18px;border:2px solid #cdcaca;border-radius:4.5px;"></div>
<div style="position:absolute;left:2527.30px;top:651.33px;width:18.4px;height:18px;border:2px solid #cdcaca;border-radius:4.5px;"></div>
<div style="position:absolute;left:2674.05px;top:651.33px;width:18.4px;height:18px;border:2px solid #cdcaca;border-radius:4.5px;"></div>
<div style="position:absolute;left:2821.55px;top:651.33px;width:18.4px;height:18px;border:2px solid #cdcaca;border-radius:4.5px;"></div>
<div style="position:absolute;left:2977.80px;top:651.33px;width:18.4px;height:18px;border:2px solid #cdcaca;border-radius:4.5px;"></div>
<div style="position:absolute;left:3134.30px;top:651.33px;width:18.4px;height:18px;border:2px solid #cdcaca;border-radius:4.5px;"></div>
<div style="position:absolute;left:0px;top:696.198px;width:67px;height:63.466999999999985px;background:#e9e9e9;"></div>
<div style="position:absolute;left:0px;top:757.865px;width:67px;height:1.8px;background:#c3c3c3;"></div>
<svg style="position:absolute;left:20.9px;top:712.50px" width="26.5" height="27"><rect x="1.25" y="1.25" width="24" height="24.4" rx="5.2" fill="none" stroke="#444" stroke-width="2.5"/></svg>
<div style="position:absolute;left:-703px;width:1000px;text-align:right;top:714.98px;font-size:25.3px;line-height:25.3px;font-weight:normal;color:#000;white-space:nowrap;">2</div>
<div style="position:absolute;left:322.5px;top:714.98px;font-size:25.3px;line-height:25.3px;font-weight:normal;color:#000;white-space:nowrap;">MS Quarters/Semesters</div>
<div style="position:absolute;left:641.5px;top:714.98px;font-size:25.3px;line-height:25.3px;font-weight:normal;color:#0b75d5;white-space:nowrap;text-decoration:underline;text-decoration-thickness:2px;text-underline-offset:8px;">Quarter 1</div>
<div style="position:absolute;left:1063.5px;top:714.98px;font-size:25.3px;line-height:25.3px;font-weight:normal;color:#000;white-space:nowrap;">Q1</div>
<div style="position:absolute;left:386.29999999999995px;width:1000px;text-align:right;top:714.98px;font-size:25.3px;line-height:25.3px;font-weight:normal;color:#000;white-space:nowrap;">08/18/16</div>
<div style="position:absolute;left:552.3px;width:1000px;text-align:right;top:714.98px;font-size:25.3px;line-height:25.3px;font-weight:normal;color:#000;white-space:nowrap;">10/20/16</div>
<div style="position:absolute;left:646.5px;width:1000px;text-align:right;top:714.98px;font-size:25.3px;line-height:25.3px;font-weight:normal;color:#000;white-space:nowrap;">43</div>
<div style="position:absolute;left:1842px;top:714.98px;font-size:25.3px;line-height:25.3px;font-weight:normal;color:#9a9a9a;white-space:nowrap;">No</div>
<div style="position:absolute;left:2376.5px;width:1000px;text-align:right;top:714.98px;font-size:25.3px;line-height:25.3px;font-weight:normal;color:#000;white-space:nowrap;">1</div>
<div style="position:absolute;left:1691.30px;top:714.80px;width:18.4px;height:18px;border:2px solid #cdcaca;border-radius:4.5px;"></div>
<svg style="position:absolute;left:1775.75px;top:713.80px" width="23.5" height="24" viewBox="0 0 23.5 24"><rect x="0" y="0" width="23.5" height="24" rx="4.8" fill="#000"/><path d="M4.6 11.0 L9.6 15.9 L19.2 6.7" fill="none" stroke="#f8f8f8" stroke-width="4.2"/></svg>
<svg style="position:absolute;left:2034.75px;top:713.80px" width="23.5" height="24" viewBox="0 0 23.5 24"><rect x="0" y="0" width="23.5" height="24" rx="4.8" fill="#000"/><path d="M4.6 11.0 L9.6 15.9 L19.2 6.7" fill="none" stroke="#c3f7b6" stroke-width="4.2"/></svg>
<svg style="position:absolute;left:2200.50px;top:713.80px" width="23.5" height="24" viewBox="0 0 23.5 24"><rect x="0" y="0" width="23.5" height="24" rx="4.8" fill="#000"/><path d="M4.6 11.0 L9.6 15.9 L19.2 6.7" fill="none" stroke="#c3f7b6" stroke-width="4.2"/></svg>
<svg style="position:absolute;left:2369.00px;top:713.80px" width="23.5" height="24" viewBox="0 0 23.5 24"><rect x="0" y="0" width="23.5" height="24" rx="4.8" fill="#000"/><path d="M4.6 11.0 L9.6 15.9 L19.2 6.7" fill="none" stroke="#c3f7b6" stroke-width="4.2"/></svg>
<svg style="position:absolute;left:2526.75px;top:713.80px" width="23.5" height="24" viewBox="0 0 23.5 24"><rect x="0" y="0" width="23.5" height="24" rx="4.8" fill="#000"/><path d="M4.6 11.0 L9.6 15.9 L19.2 6.7" fill="none" stroke="#bbe3f8" stroke-width="4.2"/></svg>
<div style="position:absolute;left:2674.05px;top:714.80px;width:18.4px;height:18px;border:2px solid #cdcaca;border-radius:4.5px;"></div>
<svg style="position:absolute;left:2821.00px;top:713.80px" width="23.5" height="24" viewBox="0 0 23.5 24"><rect x="0" y="0" width="23.5" height="24" rx="4.8" fill="#000"/><path d="M4.6 11.0 L9.6 15.9 L19.2 6.7" fill="none" stroke="#bbe3f8" stroke-width="4.2"/></svg>
<div style="position:absolute;left:2977.80px;top:714.80px;width:18.4px;height:18px;border:2px solid #cdcaca;border-radius:4.5px;"></div>
<svg style="position:absolute;left:3133.75px;top:713.80px" width="23.5" height="24" viewBox="0 0 23.5 24"><rect x="0" y="0" width="23.5" height="24" rx="4.8" fill="#000"/><path d="M4.6 11.0 L9.6 15.9 L19.2 6.7" fill="none" stroke="#bbe3f8" stroke-width="4.2"/></svg>
<div style="position:absolute;left:0px;top:759.665px;width:67px;height:63.4670000000001px;background:#e9e9e9;"></div>
<div style="position:absolute;left:0px;top:821.3320000000001px;width:67px;height:1.8px;background:#c3c3c3;"></div>
<svg style="position:absolute;left:20.9px;top:775.96px" width="26.5" height="27"><rect x="1.25" y="1.25" width="24" height="24.4" rx="5.2" fill="none" stroke="#444" stroke-width="2.5"/></svg>
<div style="position:absolute;left:-703px;width:1000px;text-align:right;top:778.45px;font-size:25.3px;line-height:25.3px;font-weight:normal;color:#000;white-space:nowrap;">3</div>
<div style="position:absolute;left:322.5px;top:778.45px;font-size:25.3px;line-height:25.3px;font-weight:normal;color:#000;white-space:nowrap;">MS Quarters/Semesters</div>
<div style="position:absolute;left:641.5px;top:778.45px;font-size:25.3px;line-height:25.3px;font-weight:normal;color:#0b75d5;white-space:nowrap;text-decoration:underline;text-decoration-thickness:2px;text-underline-offset:8px;">Mid Quarter 2</div>
<div style="position:absolute;left:1063.5px;top:778.45px;font-size:25.3px;line-height:25.3px;font-weight:normal;color:#000;white-space:nowrap;">MQ2</div>
<div style="position:absolute;left:386.29999999999995px;width:1000px;text-align:right;top:778.45px;font-size:25.3px;line-height:25.3px;font-weight:normal;color:#000;white-space:nowrap;">10/21/16</div>
<div style="position:absolute;left:552.3px;width:1000px;text-align:right;top:778.45px;font-size:25.3px;line-height:25.3px;font-weight:normal;color:#000;white-space:nowrap;">11/17/16</div>
<div style="position:absolute;left:646.5px;width:1000px;text-align:right;top:778.45px;font-size:25.3px;line-height:25.3px;font-weight:normal;color:#000;white-space:nowrap;">18</div>
<div style="position:absolute;left:1842px;top:778.45px;font-size:25.3px;line-height:25.3px;font-weight:normal;color:#9a9a9a;white-space:nowrap;">No</div>
<div style="position:absolute;left:2376.5px;width:1000px;text-align:right;top:778.45px;font-size:25.3px;line-height:25.3px;font-weight:normal;color:#000;white-space:nowrap;">2</div>
<div style="position:absolute;left:1691.30px;top:778.26px;width:18.4px;height:18px;border:2px solid #cdcaca;border-radius:4.5px;"></div>
<div style="position:absolute;left:1776.30px;top:778.26px;width:18.4px;height:18px;border:2px solid #cdcaca;border-radius:4.5px;"></div>
<svg style="position:absolute;left:2034.75px;top:777.26px" width="23.5" height="24" viewBox="0 0 23.5 24"><rect x="0" y="0" width="23.5" height="24" rx="4.8" fill="#000"/><path d="M4.6 11.0 L9.6 15.9 L19.2 6.7" fill="none" stroke="#c3f7b6" stroke-width="4.2"/></svg>
<div style="position:absolute;left:2201.05px;top:778.26px;width:18.4px;height:18px;border:2px solid #cdcaca;border-radius:4.5px;"></div>
<div style="position:absolute;left:2369.55px;top:778.26px;width:18.4px;height:18px;border:2px solid #cdcaca;border-radius:4.5px;"></div>
<div style="position:absolute;left:2527.30px;top:778.26px;width:18.4px;height:18px;border:2px solid #cdcaca;border-radius:4.5px;"></div>
<div style="position:absolute;left:2674.05px;top:778.26px;width:18.4px;height:18px;border:2px solid #cdcaca;border-radius:4.5px;"></div>
<div style="position:absolute;left:2821.55px;top:778.26px;width:18.4px;height:18px;border:2px solid #cdcaca;border-radius:4.5px;"></div>
<div style="position:absolute;left:2977.80px;top:778.26px;width:18.4px;height:18px;border:2px solid #cdcaca;border-radius:4.5px;"></div>
<div style="position:absolute;left:3134.30px;top:778.26px;width:18.4px;height:18px;border:2px solid #cdcaca;border-radius:4.5px;"></div>
<div style="position:absolute;left:0px;top:823.1320000000001px;width:67px;height:63.46699999999987px;background:#e9e9e9;"></div>
<div style="position:absolute;left:0px;top:884.799px;width:67px;height:1.8px;background:#c3c3c3;"></div>
<svg style="position:absolute;left:20.9px;top:839.43px" width="26.5" height="27"><rect x="1.25" y="1.25" width="24" height="24.4" rx="5.2" fill="none" stroke="#444" stroke-width="2.5"/></svg>
<div style="position:absolute;left:-703px;width:1000px;text-align:right;top:841.92px;font-size:25.3px;line-height:25.3px;font-weight:normal;color:#000;white-space:nowrap;">4</div>
<div style="position:absolute;left:322.5px;top:841.92px;font-size:25.3px;line-height:25.3px;font-weight:normal;color:#000;white-space:nowrap;">MS Quarters/Semesters</div>
<div style="position:absolute;left:641.5px;top:841.92px;font-size:25.3px;line-height:25.3px;font-weight:normal;color:#0b75d5;white-space:nowrap;text-decoration:underline;text-decoration-thickness:2px;text-underline-offset:8px;">Quarter 2</div>
<div style="position:absolute;left:1063.5px;top:841.92px;font-size:25.3px;line-height:25.3px;font-weight:normal;color:#000;white-space:nowrap;">Q2</div>
<div style="position:absolute;left:386.29999999999995px;width:1000px;text-align:right;top:841.92px;font-size:25.3px;line-height:25.3px;font-weight:normal;color:#000;white-space:nowrap;">10/21/16</div>
<div style="position:absolute;left:552.3px;width:1000px;text-align:right;top:841.92px;font-size:25.3px;line-height:25.3px;font-weight:normal;color:#000;white-space:nowrap;">01/12/17</div>
<div style="position:absolute;left:646.5px;width:1000px;text-align:right;top:841.92px;font-size:25.3px;line-height:25.3px;font-weight:normal;color:#000;white-space:nowrap;">29</div>
<div style="position:absolute;left:1842px;top:841.92px;font-size:25.3px;line-height:25.3px;font-weight:normal;color:#9a9a9a;white-space:nowrap;">No</div>
<div style="position:absolute;left:2376.5px;width:1000px;text-align:right;top:841.92px;font-size:25.3px;line-height:25.3px;font-weight:normal;color:#000;white-space:nowrap;">3</div>
<div style="position:absolute;left:1691.30px;top:841.73px;width:18.4px;height:18px;border:2px solid #cdcaca;border-radius:4.5px;"></div>
<svg style="position:absolute;left:1775.75px;top:840.73px" width="23.5" height="24" viewBox="0 0 23.5 24"><rect x="0" y="0" width="23.5" height="24" rx="4.8" fill="#000"/><path d="M4.6 11.0 L9.6 15.9 L19.2 6.7" fill="none" stroke="#f8f8f8" stroke-width="4.2"/></svg>
<svg style="position:absolute;left:2034.75px;top:840.73px" width="23.5" height="24" viewBox="0 0 23.5 24"><rect x="0" y="0" width="23.5" height="24" rx="4.8" fill="#000"/><path d="M4.6 11.0 L9.6 15.9 L19.2 6.7" fill="none" stroke="#c3f7b6" stroke-width="4.2"/></svg>
<svg style="position:absolute;left:2200.50px;top:840.73px" width="23.5" height="24" viewBox="0 0 23.5 24"><rect x="0" y="0" width="23.5" height="24" rx="4.8" fill="#000"/><path d="M4.6 11.0 L9.6 15.9 L19.2 6.7" fill="none" stroke="#c3f7b6" stroke-width="4.2"/></svg>
<svg style="position:absolute;left:2369.00px;top:840.73px" width="23.5" height="24" viewBox="0 0 23.5 24"><rect x="0" y="0" width="23.5" height="24" rx="4.8" fill="#000"/><path d="M4.6 11.0 L9.6 15.9 L19.2 6.7" fill="none" stroke="#c3f7b6" stroke-width="4.2"/></svg>
<div style="position:absolute;left:2527.30px;top:841.73px;width:18.4px;height:18px;border:2px solid #cdcaca;border-radius:4.5px;"></div>
<div style="position:absolute;left:2674.05px;top:841.73px;width:18.4px;height:18px;border:2px solid #cdcaca;border-radius:4.5px;"></div>
<svg style="position:absolute;left:2821.00px;top:840.73px" width="23.5" height="24" viewBox="0 0 23.5 24"><rect x="0" y="0" width="23.5" height="24" rx="4.8" fill="#000"/><path d="M4.6 11.0 L9.6 15.9 L19.2 6.7" fill="none" stroke="#bbe3f8" stroke-width="4.2"/></svg>
<div style="position:absolute;left:2977.80px;top:841.73px;width:18.4px;height:18px;border:2px solid #cdcaca;border-radius:4.5px;"></div>
<svg style="position:absolute;left:3133.75px;top:840.73px" width="23.5" height="24" viewBox="0 0 23.5 24"><rect x="0" y="0" width="23.5" height="24" rx="4.8" fill="#000"/><path d="M4.6 11.0 L9.6 15.9 L19.2 6.7" fill="none" stroke="#bbe3f8" stroke-width="4.2"/></svg>
<div style="position:absolute;left:0px;top:886.5989999999999px;width:67px;height:63.4670000000001px;background:#e9e9e9;"></div>
<div style="position:absolute;left:0px;top:948.2660000000001px;width:67px;height:1.8px;background:#c3c3c3;"></div>
<svg style="position:absolute;left:20.9px;top:902.90px" width="26.5" height="27"><rect x="1.25" y="1.25" width="24" height="24.4" rx="5.2" fill="none" stroke="#444" stroke-width="2.5"/></svg>
<div style="position:absolute;left:-703px;width:1000px;text-align:right;top:905.38px;font-size:25.3px;line-height:25.3px;font-weight:normal;color:#000;white-space:nowrap;">5</div>
<div style="position:absolute;left:322.5px;top:905.38px;font-size:25.3px;line-height:25.3px;font-weight:normal;color:#000;white-space:nowrap;">MS Quarters/Semesters</div>
<div style="position:absolute;left:641.5px;top:905.38px;font-size:25.3px;line-height:25.3px;font-weight:normal;color:#0b75d5;white-space:nowrap;text-decoration:underline;text-decoration-thickness:2px;text-underline-offset:8px;">MS Semester 1</div>
<div style="position:absolute;left:1063.5px;top:905.38px;font-size:25.3px;line-height:25.3px;font-weight:normal;color:#000;white-space:nowrap;">MSS1</div>
<div style="position:absolute;left:386.29999999999995px;width:1000px;text-align:right;top:905.38px;font-size:25.3px;line-height:25.3px;font-weight:normal;color:#000;white-space:nowrap;">08/18/16</div>
<div style="position:absolute;left:552.3px;width:1000px;text-align:right;top:905.38px;font-size:25.3px;line-height:25.3px;font-weight:normal;color:#000;white-space:nowrap;">01/12/17</div>
<div style="position:absolute;left:646.5px;width:1000px;text-align:right;top:905.38px;font-size:25.3px;line-height:25.3px;font-weight:normal;color:#000;white-space:nowrap;">72</div>
<div style="position:absolute;left:1842px;top:905.38px;font-size:25.3px;line-height:25.3px;font-weight:normal;color:#9a9a9a;white-space:nowrap;">No</div>
<div style="position:absolute;left:2376.5px;width:1000px;text-align:right;top:905.38px;font-size:25.3px;line-height:25.3px;font-weight:normal;color:#000;white-space:nowrap;">4</div>
<svg style="position:absolute;left:1690.75px;top:904.20px" width="23.5" height="24" viewBox="0 0 23.5 24"><rect x="0" y="0" width="23.5" height="24" rx="4.8" fill="#000"/><path d="M4.6 11.0 L9.6 15.9 L19.2 6.7" fill="none" stroke="#f8f8f8" stroke-width="4.2"/></svg>
<div style="position:absolute;left:1776.30px;top:905.20px;width:18.4px;height:18px;border:2px solid #cdcaca;border-radius:4.5px;"></div>
<svg style="position:absolute;left:2034.75px;top:904.20px" width="23.5" height="24" viewBox="0 0 23.5 24"><rect x="0" y="0" width="23.5" height="24" rx="4.8" fill="#000"/><path d="M4.6 11.0 L9.6 15.9 L19.2 6.7" fill="none" stroke="#c3f7b6" stroke-width="4.2"/></svg>
<svg style="position:absolute;left:2200.50px;top:904.20px" width="23.5" height="24" viewBox="0 0 23.5 24"><rect x="0" y="0" width="23.5" height="24" rx="4.8" fill="#000"/><path d="M4.6 11.0 L9.6 15.9 L19.2 6.7" fill="none" stroke="#c3f7b6" stroke-width="4.2"/></svg>
<svg style="position:absolute;left:2369.00px;top:904.20px" width="23.5" height="24" viewBox="0 0 23.5 24"><rect x="0" y="0" width="23.5" height="24" rx="4.8" fill="#000"/><path d="M4.6 11.0 L9.6 15.9 L19.2 6.7" fill="none" stroke="#c3f7b6" stroke-width="4.2"/></svg>
<svg style="position:absolute;left:2526.75px;top:904.20px" width="23.5" height="24" viewBox="0 0 23.5 24"><rect x="0" y="0" width="23.5" height="24" rx="4.8" fill="#000"/><path d="M4.6 11.0 L9.6 15.9 L19.2 6.7" fill="none" stroke="#bbe3f8" stroke-width="4.2"/></svg>
<svg style="position:absolute;left:2673.50px;top:904.20px" width="23.5" height="24" viewBox="0 0 23.5 24"><rect x="0" y="0" width="23.5" height="24" rx="4.8" fill="#000"/><path d="M4.6 11.0 L9.6 15.9 L19.2 6.7" fill="none" stroke="#bbe3f8" stroke-width="4.2"/></svg>
<svg style="position:absolute;left:2821.00px;top:904.20px" width="23.5" height="24" viewBox="0 0 23.5 24"><rect x="0" y="0" width="23.5" height="24" rx="4.8" fill="#000"/><path d="M4.6 11.0 L9.6 15.9 L19.2 6.7" fill="none" stroke="#bbe3f8" stroke-width="4.2"/></svg>
<svg style="position:absolute;left:2977.25px;top:904.20px" width="23.5" height="24" viewBox="0 0 23.5 24"><rect x="0" y="0" width="23.5" height="24" rx="4.8" fill="#000"/><path d="M4.6 11.0 L9.6 15.9 L19.2 6.7" fill="none" stroke="#bbe3f8" stroke-width="4.2"/></svg>
<svg style="position:absolute;left:3133.75px;top:904.20px" width="23.5" height="24" viewBox="0 0 23.5 24"><rect x="0" y="0" width="23.5" height="24" rx="4.8" fill="#000"/><path d="M4.6 11.0 L9.6 15.9 L19.2 6.7" fill="none" stroke="#bbe3f8" stroke-width="4.2"/></svg>
<div style="position:absolute;left:0px;top:950.066px;width:67px;height:63.46699999999987px;background:#e9e9e9;"></div>
<div style="position:absolute;left:0px;top:1011.733px;width:67px;height:1.8px;background:#c3c3c3;"></div>
<svg style="position:absolute;left:20.9px;top:966.37px" width="26.5" height="27"><rect x="1.25" y="1.25" width="24" height="24.4" rx="5.2" fill="none" stroke="#444" stroke-width="2.5"/></svg>
<div style="position:absolute;left:-703px;width:1000px;text-align:right;top:968.85px;font-size:25.3px;line-height:25.3px;font-weight:normal;color:#000;white-space:nowrap;">7</div>
<div style="position:absolute;left:322.5px;top:968.85px;font-size:25.3px;line-height:25.3px;font-weight:normal;color:#000;white-space:nowrap;">MS Quarters/Semesters</div>
<div style="position:absolute;left:641.5px;top:968.85px;font-size:25.3px;line-height:25.3px;font-weight:normal;color:#0b75d5;white-space:nowrap;text-decoration:underline;text-decoration-thickness:2px;text-underline-offset:8px;">Mid Quarter 3</div>
<div style="position:absolute;left:1063.5px;top:968.85px;font-size:25.3px;line-height:25.3px;font-weight:normal;color:#000;white-space:nowrap;">MQ3</div>
<div style="position:absolute;left:386.29999999999995px;width:1000px;text-align:right;top:968.85px;font-size:25.3px;line-height:25.3px;font-weight:normal;color:#000;white-space:nowrap;">01/13/17</div>
<div style="position:absolute;left:552.3px;width:1000px;text-align:right;top:968.85px;font-size:25.3px;line-height:25.3px;font-weight:normal;color:#000;white-space:nowrap;">02/27/17</div>
<div style="position:absolute;left:646.5px;width:1000px;text-align:right;top:968.85px;font-size:25.3px;line-height:25.3px;font-weight:normal;color:#000;white-space:nowrap;">26</div>
<div style="position:absolute;left:1842px;top:968.85px;font-size:25.3px;line-height:25.3px;font-weight:normal;color:#9a9a9a;white-space:nowrap;">No</div>
<div style="position:absolute;left:2376.5px;width:1000px;text-align:right;top:968.85px;font-size:25.3px;line-height:25.3px;font-weight:normal;color:#000;white-space:nowrap;">5</div>
<div style="position:absolute;left:1691.30px;top:968.67px;width:18.4px;height:18px;border:2px solid #cdcaca;border-radius:4.5px;"></div>
<div style="position:absolute;left:1776.30px;top:968.67px;width:18.4px;height:18px;border:2px solid #cdcaca;border-radius:4.5px;"></div>
<svg style="position:absolute;left:2034.75px;top:967.67px" width="23.5" height="24" viewBox="0 0 23.5 24"><rect x="0" y="0" width="23.5" height="24" rx="4.8" fill="#000"/><path d="M4.6 11.0 L9.6 15.9 L19.2 6.7" fill="none" stroke="#c3f7b6" stroke-width="4.2"/></svg>
<div style="position:absolute;left:2201.05px;top:968.67px;width:18.4px;height:18px;border:2px solid #cdcaca;border-radius:4.5px;"></div>
<div style="position:absolute;left:2369.55px;top:968.67px;width:18.4px;height:18px;border:2px solid #cdcaca;border-radius:4.5px;"></div>
<div style="position:absolute;left:2527.30px;top:968.67px;width:18.4px;height:18px;border:2px solid #cdcaca;border-radius:4.5px;"></div>
<div style="position:absolute;left:2674.05px;top:968.67px;width:18.4px;height:18px;border:2px solid #cdcaca;border-radius:4.5px;"></div>
<div style="position:absolute;left:2821.55px;top:968.67px;width:18.4px;height:18px;border:2px solid #cdcaca;border-radius:4.5px;"></div>
<div style="position:absolute;left:2977.80px;top:968.67px;width:18.4px;height:18px;border:2px solid #cdcaca;border-radius:4.5px;"></div>
<svg style="position:absolute;left:3133.75px;top:967.67px" width="23.5" height="24" viewBox="0 0 23.5 24"><rect x="0" y="0" width="23.5" height="24" rx="4.8" fill="#000"/><path d="M4.6 11.0 L9.6 15.9 L19.2 6.7" fill="none" stroke="#bbe3f8" stroke-width="4.2"/></svg>
<div style="position:absolute;left:0px;top:1013.5329999999999px;width:67px;height:63.4670000000001px;background:#e9e9e9;"></div>
<div style="position:absolute;left:0px;top:1075.2px;width:67px;height:1.8px;background:#c3c3c3;"></div>
<svg style="position:absolute;left:20.9px;top:1029.83px" width="26.5" height="27"><rect x="1.25" y="1.25" width="24" height="24.4" rx="5.2" fill="none" stroke="#444" stroke-width="2.5"/></svg>
<div style="position:absolute;left:-703px;width:1000px;text-align:right;top:1032.32px;font-size:25.3px;line-height:25.3px;font-weight:normal;color:#000;white-space:nowrap;">8</div>
<div style="position:absolute;left:322.5px;top:1032.32px;font-size:25.3px;line-height:25.3px;font-weight:normal;color:#000;white-space:nowrap;">MS Quarters/Semesters</div>
<div style="position:absolute;left:641.5px;top:1032.32px;font-size:25.3px;line-height:25.3px;font-weight:normal;color:#0b75d5;white-space:nowrap;text-decoration:underline;text-decoration-thickness:2px;text-underline-offset:8px;">Quarter 3</div>
<div style="position:absolute;left:1063.5px;top:1032.32px;font-size:25.3px;line-height:25.3px;font-weight:normal;color:#000;white-space:nowrap;">Q3</div>
<div style="position:absolute;left:386.29999999999995px;width:1000px;text-align:right;top:1032.32px;font-size:25.3px;line-height:25.3px;font-weight:normal;color:#000;white-space:nowrap;">01/13/17</div>
<div style="position:absolute;left:552.3px;width:1000px;text-align:right;top:1032.32px;font-size:25.3px;line-height:25.3px;font-weight:normal;color:#000;white-space:nowrap;">03/23/17</div>
<div style="position:absolute;left:646.5px;width:1000px;text-align:right;top:1032.32px;font-size:25.3px;line-height:25.3px;font-weight:normal;color:#000;white-space:nowrap;">44</div>
<div style="position:absolute;left:1842px;top:1032.32px;font-size:25.3px;line-height:25.3px;font-weight:normal;color:#000;white-space:nowrap;">Yes</div>
<div style="position:absolute;left:2376.5px;width:1000px;text-align:right;top:1032.32px;font-size:25.3px;line-height:25.3px;font-weight:normal;color:#000;white-space:nowrap;">8</div>
<div style="position:absolute;left:1691.30px;top:1032.13px;width:18.4px;height:18px;border:2px solid #cdcaca;border-radius:4.5px;"></div>
<svg style="position:absolute;left:1775.75px;top:1031.13px" width="23.5" height="24" viewBox="0 0 23.5 24"><rect x="0" y="0" width="23.5" height="24" rx="4.8" fill="#000"/><path d="M4.6 11.0 L9.6 15.9 L19.2 6.7" fill="none" stroke="#f8f8f8" stroke-width="4.2"/></svg>
<svg style="position:absolute;left:2034.75px;top:1031.13px" width="23.5" height="24" viewBox="0 0 23.5 24"><rect x="0" y="0" width="23.5" height="24" rx="4.8" fill="#000"/><path d="M4.6 11.0 L9.6 15.9 L19.2 6.7" fill="none" stroke="#c3f7b6" stroke-width="4.2"/></svg>
<svg style="position:absolute;left:2200.50px;top:1031.13px" width="23.5" height="24" viewBox="0 0 23.5 24"><rect x="0" y="0" width="23.5" height="24" rx="4.8" fill="#000"/><path d="M4.6 11.0 L9.6 15.9 L19.2 6.7" fill="none" stroke="#c3f7b6" stroke-width="4.2"/></svg>
<svg style="position:absolute;left:2369.00px;top:1031.13px" width="23.5" height="24" viewBox="0 0 23.5 24"><rect x="0" y="0" width="23.5" height="24" rx="4.8" fill="#000"/><path d="M4.6 11.0 L9.6 15.9 L19.2 6.7" fill="none" stroke="#c3f7b6" stroke-width="4.2"/></svg>
<div style="position:absolute;left:2527.30px;top:1032.13px;width:18.4px;height:18px;border:2px solid #cdcaca;border-radius:4.5px;"></div>
<div style="position:absolute;left:2674.05px;top:1032.13px;width:18.4px;height:18px;border:2px solid #cdcaca;border-radius:4.5px;"></div>
<svg style="position:absolute;left:2821.00px;top:1031.13px" width="23.5" height="24" viewBox="0 0 23.5 24"><rect x="0" y="0" width="23.5" height="24" rx="4.8" fill="#000"/><path d="M4.6 11.0 L9.6 15.9 L19.2 6.7" fill="none" stroke="#bbe3f8" stroke-width="4.2"/></svg>
<div style="position:absolute;left:2977.80px;top:1032.13px;width:18.4px;height:18px;border:2px solid #cdcaca;border-radius:4.5px;"></div>
<svg style="position:absolute;left:3133.75px;top:1031.13px" width="23.5" height="24" viewBox="0 0 23.5 24"><rect x="0" y="0" width="23.5" height="24" rx="4.8" fill="#000"/><path d="M4.6 11.0 L9.6 15.9 L19.2 6.7" fill="none" stroke="#bbe3f8" stroke-width="4.2"/></svg>
<div style="position:absolute;left:0px;top:1077.0px;width:67px;height:63.46699999999987px;background:#e9e9e9;"></div>
<div style="position:absolute;left:0px;top:1138.667px;width:67px;height:1.8px;background:#c3c3c3;"></div>
<svg style="position:absolute;left:20.9px;top:1093.30px" width="26.5" height="27"><rect x="1.25" y="1.25" width="24" height="24.4" rx="5.2" fill="none" stroke="#444" stroke-width="2.5"/></svg>
<div style="position:absolute;left:-703px;width:1000px;text-align:right;top:1095.78px;font-size:25.3px;line-height:25.3px;font-weight:normal;color:#000;white-space:nowrap;">9</div>
<div style="position:absolute;left:322.5px;top:1095.78px;font-size:25.3px;line-height:25.3px;font-weight:normal;color:#000;white-space:nowrap;">MS Quarters/Semesters</div>
<div style="position:absolute;left:641.5px;top:1095.78px;font-size:25.3px;line-height:25.3px;font-weight:normal;color:#0b75d5;white-space:nowrap;text-decoration:underline;text-decoration-thickness:2px;text-underline-offset:8px;">Mid Quarter 4</div>
<div style="position:absolute;left:1063.5px;top:1095.78px;font-size:25.3px;line-height:25.3px;font-weight:normal;color:#000;white-space:nowrap;">MQ4</div>
<div style="position:absolute;left:386.29999999999995px;width:1000px;text-align:right;top:1095.78px;font-size:25.3px;line-height:25.3px;font-weight:normal;color:#000;white-space:nowrap;">03/24/17</div>
<div style="position:absolute;left:552.3px;width:1000px;text-align:right;top:1095.78px;font-size:25.3px;line-height:25.3px;font-weight:normal;color:#000;white-space:nowrap;">04/17/17</div>
<div style="position:absolute;left:646.5px;width:1000px;text-align:right;top:1095.78px;font-size:25.3px;line-height:25.3px;font-weight:normal;color:#000;white-space:nowrap;">14</div>
<div style="position:absolute;left:1842px;top:1095.78px;font-size:25.3px;line-height:25.3px;font-weight:normal;color:#000;white-space:nowrap;">Yes</div>
<div style="position:absolute;left:2376.5px;width:1000px;text-align:right;top:1095.78px;font-size:25.3px;line-height:25.3px;font-weight:normal;color:#000;white-space:nowrap;">9</div>
<div style="position:absolute;left:1691.30px;top:1095.60px;width:18.4px;height:18px;border:2px solid #cdcaca;border-radius:4.5px;"></div>
<div style="position:absolute;left:1776.30px;top:1095.60px;width:18.4px;height:18px;border:2px solid #cdcaca;border-radius:4.5px;"></div>
<svg style="position:absolute;left:2034.75px;top:1094.60px" width="23.5" height="24" viewBox="0 0 23.5 24"><rect x="0" y="0" width="23.5" height="24" rx="4.8" fill="#000"/><path d="M4.6 11.0 L9.6 15.9 L19.2 6.7" fill="none" stroke="#c3f7b6" stroke-width="4.2"/></svg>
<div style="position:absolute;left:2201.05px;top:1095.60px;width:18.4px;height:18px;border:2px solid #cdcaca;border-radius:4.5px;"></div>
<div style="position:absolute;left:2369.55px;top:1095.60px;width:18.4px;height:18px;border:2px solid #cdcaca;border-radius:4.5px;"></div>
<div style="position:absolute;left:2527.30px;top:1095.60px;width:18.4px;height:18px;border:2px solid #cdcaca;border-radius:4.5px;"></div>
<div style="position:absolute;left:2674.05px;top:1095.60px;width:18.4px;height:18px;border:2px solid #cdcaca;border-radius:4.5px;"></div>
<div style="position:absolute;left:2821.55px;top:1095.60px;width:18.4px;height:18px;border:2px solid #cdcaca;border-radius:4.5px;"></div>
<div style="position:absolute;left:2977.80px;top:1095.60px;width:18.4px;height:18px;border:2px solid #cdcaca;border-radius:4.5px;"></div>
<svg style="position:absolute;left:3133.75px;top:1094.60px" width="23.5" height="24" viewBox="0 0 23.5 24"><rect x="0" y="0" width="23.5" height="24" rx="4.8" fill="#000"/><path d="M4.6 11.0 L9.6 15.9 L19.2 6.7" fill="none" stroke="#bbe3f8" stroke-width="4.2"/></svg>
<div style="position:absolute;left:0px;top:1140.4669999999999px;width:67px;height:63.4670000000001px;background:#e9e9e9;"></div>
<div style="position:absolute;left:0px;top:1202.134px;width:67px;height:1.8px;background:#c3c3c3;"></div>
<svg style="position:absolute;left:20.9px;top:1156.77px" width="26.5" height="27"><rect x="1.25" y="1.25" width="24" height="24.4" rx="5.2" fill="none" stroke="#444" stroke-width="2.5"/></svg>
<div style="position:absolute;left:-703px;width:1000px;text-align:right;top:1159.25px;font-size:25.3px;line-height:25.3px;font-weight:normal;color:#000;white-space:nowrap;">10</div>
<div style="position:absolute;left:322.5px;top:1159.25px;font-size:25.3px;line-height:25.3px;font-weight:normal;color:#000;white-space:nowrap;">MS Quarters/Semesters</div>
<div style="position:absolute;left:641.5px;top:1159.25px;font-size:25.3px;line-height:25.3px;font-weight:normal;color:#0b75d5;white-space:nowrap;text-decoration:underline;text-decoration-thickness:2px;text-underline-offset:8px;">Quarter 4</div>
<div style="position:absolute;left:1063.5px;top:1159.25px;font-size:25.3px;line-height:25.3px;font-weight:normal;color:#000;white-space:nowrap;">Q4</div>
<div style="position:absolute;left:386.29999999999995px;width:1000px;text-align:right;top:1159.25px;font-size:25.3px;line-height:25.3px;font-weight:normal;color:#000;white-space:nowrap;">03/24/17</div>
<div style="position:absolute;left:552.3px;width:1000px;text-align:right;top:1159.25px;font-size:25.3px;line-height:25.3px;font-weight:normal;color:#000;white-space:nowrap;">06/02/17</div>
<div style="position:absolute;left:646.5px;width:1000px;text-align:right;top:1159.25px;font-size:25.3px;line-height:25.3px;font-weight:normal;color:#000;white-space:nowrap;">46</div>
<div style="position:absolute;left:1842px;top:1159.25px;font-size:25.3px;line-height:25.3px;font-weight:normal;color:#000;white-space:nowrap;">Yes</div>
<div style="position:absolute;left:2376.5px;width:1000px;text-align:right;top:1159.25px;font-size:25.3px;line-height:25.3px;font-weight:normal;color:#000;white-space:nowrap;">10</div>
<div style="position:absolute;left:1691.30px;top:1159.07px;width:18.4px;height:18px;border:2px solid #cdcaca;border-radius:4.5px;"></div>
<svg style="position:absolute;left:1775.75px;top:1158.07px" width="23.5" height="24" viewBox="0 0 23.5 24"><rect x="0" y="0" width="23.5" height="24" rx="4.8" fill="#000"/><path d="M4.6 11.0 L9.6 15.9 L19.2 6.7" fill="none" stroke="#f8f8f8" stroke-width="4.2"/></svg>
<svg style="position:absolute;left:2034.75px;top:1158.07px" width="23.5" height="24" viewBox="0 0 23.5 24"><rect x="0" y="0" width="23.5" height="24" rx="4.8" fill="#000"/><path d="M4.6 11.0 L9.6 15.9 L19.2 6.7" fill="none" stroke="#c3f7b6" stroke-width="4.2"/></svg>
<svg style="position:absolute;left:2200.50px;top:1158.07px" width="23.5" height="24" viewBox="0 0 23.5 24"><rect x="0" y="0" width="23.5" height="24" rx="4.8" fill="#000"/><path d="M4.6 11.0 L9.6 15.9 L19.2 6.7" fill="none" stroke="#c3f7b6" stroke-width="4.2"/></svg>
<svg style="position:absolute;left:2369.00px;top:1158.07px" width="23.5" height="24" viewBox="0 0 23.5 24"><rect x="0" y="0" width="23.5" height="24" rx="4.8" fill="#000"/><path d="M4.6 11.0 L9.6 15.9 L19.2 6.7" fill="none" stroke="#c3f7b6" stroke-width="4.2"/></svg>
<div style="position:absolute;left:2527.30px;top:1159.07px;width:18.4px;height:18px;border:2px solid #cdcaca;border-radius:4.5px;"></div>
<div style="position:absolute;left:2674.05px;top:1159.07px;width:18.4px;height:18px;border:2px solid #cdcaca;border-radius:4.5px;"></div>
<svg style="position:absolute;left:2821.00px;top:1158.07px" width="23.5" height="24" viewBox="0 0 23.5 24"><rect x="0" y="0" width="23.5" height="24" rx="4.8" fill="#000"/><path d="M4.6 11.0 L9.6 15.9 L19.2 6.7" fill="none" stroke="#bbe3f8" stroke-width="4.2"/></svg>
<div style="position:absolute;left:2977.80px;top:1159.07px;width:18.4px;height:18px;border:2px solid #cdcaca;border-radius:4.5px;"></div>
<svg style="position:absolute;left:3133.75px;top:1158.07px" width="23.5" height="24" viewBox="0 0 23.5 24"><rect x="0" y="0" width="23.5" height="24" rx="4.8" fill="#000"/><path d="M4.6 11.0 L9.6 15.9 L19.2 6.7" fill="none" stroke="#bbe3f8" stroke-width="4.2"/></svg>
<div style="position:absolute;left:0px;top:1203.934px;width:67px;height:63.4670000000001px;background:#e9e9e9;"></div>
<div style="position:absolute;left:0px;top:1265.601px;width:67px;height:1.8px;background:#c3c3c3;"></div>
<svg style="position:absolute;left:20.9px;top:1220.23px" width="26.5" height="27"><rect x="1.25" y="1.25" width="24" height="24.4" rx="5.2" fill="none" stroke="#444" stroke-width="2.5"/></svg>
<div style="position:absolute;left:-703px;width:1000px;text-align:right;top:1222.72px;font-size:25.3px;line-height:25.3px;font-weight:normal;color:#000;white-space:nowrap;">11</div>
<div style="position:absolute;left:322.5px;top:1222.72px;font-size:25.3px;line-height:25.3px;font-weight:normal;color:#000;white-space:nowrap;">MS Quarters/Semesters</div>
<div style="position:absolute;left:641.5px;top:1222.72px;font-size:25.3px;line-height:25.3px;font-weight:normal;color:#0b75d5;white-space:nowrap;text-decoration:underline;text-decoration-thickness:2px;text-underline-offset:8px;">MS Semester 2</div>
<div style="position:absolute;left:1063.5px;top:1222.72px;font-size:25.3px;line-height:25.3px;font-weight:normal;color:#000;white-space:nowrap;">MSS2</div>
<div style="position:absolute;left:386.29999999999995px;width:1000px;text-align:right;top:1222.72px;font-size:25.3px;line-height:25.3px;font-weight:normal;color:#000;white-space:nowrap;">01/13/17</div>
<div style="position:absolute;left:552.3px;width:1000px;text-align:right;top:1222.72px;font-size:25.3px;line-height:25.3px;font-weight:normal;color:#000;white-space:nowrap;">06/02/17</div>
<div style="position:absolute;left:646.5px;width:1000px;text-align:right;top:1222.72px;font-size:25.3px;line-height:25.3px;font-weight:normal;color:#000;white-space:nowrap;">90</div>
<div style="position:absolute;left:1842px;top:1222.72px;font-size:25.3px;line-height:25.3px;font-weight:normal;color:#9a9a9a;white-space:nowrap;">No</div>
<div style="position:absolute;left:2376.5px;width:1000px;text-align:right;top:1222.72px;font-size:25.3px;line-height:25.3px;font-weight:normal;color:#000;white-space:nowrap;">11</div>
<svg style="position:absolute;left:1690.75px;top:1221.53px" width="23.5" height="24" viewBox="0 0 23.5 24"><rect x="0" y="0" width="23.5" height="24" rx="4.8" fill="#000"/><path d="M4.6 11.0 L9.6 15.9 L19.2 6.7" fill="none" stroke="#f8f8f8" stroke-width="4.2"/></svg>
<div style="position:absolute;left:1776.30px;top:1222.53px;width:18.4px;height:18px;border:2px solid #cdcaca;border-radius:4.5px;"></div>
<svg style="position:absolute;left:2034.75px;top:1221.53px" width="23.5" height="24" viewBox="0 0 23.5 24"><rect x="0" y="0" width="23.5" height="24" rx="4.8" fill="#000"/><path d="M4.6 11.0 L9.6 15.9 L19.2 6.7" fill="none" stroke="#c3f7b6" stroke-width="4.2"/></svg>
<svg style="position:absolute;left:2200.50px;top:1221.53px" width="23.5" height="24" viewBox="0 0 23.5 24"><rect x="0" y="0" width="23.5" height="24" rx="4.8" fill="#000"/><path d="M4.6 11.0 L9.6 15.9 L19.2 6.7" fill="none" stroke="#c3f7b6" stroke-width="4.2"/></svg>
<svg style="position:absolute;left:2369.00px;top:1221.53px" width="23.5" height="24" viewBox="0 0 23.5 24"><rect x="0" y="0" width="23.5" height="24" rx="4.8" fill="#000"/><path d="M4.6 11.0 L9.6 15.9 L19.2 6.7" fill="none" stroke="#c3f7b6" stroke-width="4.2"/></svg>
<svg style="position:absolute;left:2526.75px;top:1221.53px" width="23.5" height="24" viewBox="0 0 23.5 24"><rect x="0" y="0" width="23.5" height="24" rx="4.8" fill="#000"/><path d="M4.6 11.0 L9.6 15.9 L19.2 6.7" fill="none" stroke="#bbe3f8" stroke-width="4.2"/></svg>
<svg style="position:absolute;left:2673.50px;top:1221.53px" width="23.5" height="24" viewBox="0 0 23.5 24"><rect x="0" y="0" width="23.5" height="24" rx="4.8" fill="#000"/><path d="M4.6 11.0 L9.6 15.9 L19.2 6.7" fill="none" stroke="#bbe3f8" stroke-width="4.2"/></svg>
<svg style="position:absolute;left:2821.00px;top:1221.53px" width="23.5" height="24" viewBox="0 0 23.5 24"><rect x="0" y="0" width="23.5" height="24" rx="4.8" fill="#000"/><path d="M4.6 11.0 L9.6 15.9 L19.2 6.7" fill="none" stroke="#bbe3f8" stroke-width="4.2"/></svg>
<svg style="position:absolute;left:2977.25px;top:1221.53px" width="23.5" height="24" viewBox="0 0 23.5 24"><rect x="0" y="0" width="23.5" height="24" rx="4.8" fill="#000"/><path d="M4.6 11.0 L9.6 15.9 L19.2 6.7" fill="none" stroke="#bbe3f8" stroke-width="4.2"/></svg>
<svg style="position:absolute;left:3133.75px;top:1221.53px" width="23.5" height="24" viewBox="0 0 23.5 24"><rect x="0" y="0" width="23.5" height="24" rx="4.8" fill="#000"/><path d="M4.6 11.0 L9.6 15.9 L19.2 6.7" fill="none" stroke="#bbe3f8" stroke-width="4.2"/></svg>
<div style="position:absolute;left:0px;top:1267.401px;width:67px;height:63.46699999999987px;background:#e9e9e9;"></div>
<div style="position:absolute;left:0px;top:1329.068px;width:67px;height:1.8px;background:#c3c3c3;"></div>
<svg style="position:absolute;left:20.9px;top:1283.70px" width="26.5" height="27"><rect x="1.25" y="1.25" width="24" height="24.4" rx="5.2" fill="none" stroke="#444" stroke-width="2.5"/></svg>
<div style="position:absolute;left:67px;top:1267.401px;width:3749px;height:63.46699999999987px;background:#ededed;"></div>
<div style="position:absolute;left:67px;top:1328.868px;width:3749px;height:2px;background:#a9a9a9;"></div>
<div style="position:absolute;left:3815px;top:1267.401px;width:2px;height:61.46699999999987px;background:repeating-linear-gradient(to bottom, rgba(0,0,0,0.2) 0px, rgba(0,0,0,0.2) 2px, transparent 2px, transparent 4px);"></div>
<svg style="position:absolute;left:90px;top:1288.30px" width="18" height="18"><polygon points="17,0 17,16.8 0.2,16.8" fill="#3a3a3a"/></svg>
<div style="position:absolute;left:128px;top:1283.51px;font-size:30.7px;line-height:30.7px;font-weight:bold;color:#000;white-space:nowrap;">Summer</div>
<svg style="position:absolute;left:1074.5px;top:1288.30px" width="18" height="18"><polygon points="17,0 17,16.8 0.2,16.8" fill="#3a3a3a"/></svg>
<div style="position:absolute;left:1112.5px;top:1283.51px;font-size:30.7px;line-height:30.7px;font-weight:bold;color:#000;white-space:nowrap;">Summer</div>
<div style="position:absolute;left:273.84911999999997px;top:1288.34px;font-size:25px;line-height:25px;font-weight:normal;color:#9a9a9a;white-space:nowrap;">(5 records)</div>
<div style="position:absolute;left:1258.34912px;top:1288.34px;font-size:25px;line-height:25px;font-weight:normal;color:#9a9a9a;white-space:nowrap;">(5 records)</div>
<div style="position:absolute;left:0px;top:1330.868px;width:67px;height:63.4670000000001px;background:#e9e9e9;"></div>
<div style="position:absolute;left:0px;top:1392.535px;width:67px;height:1.8px;background:#c3c3c3;"></div>
<svg style="position:absolute;left:20.9px;top:1347.17px" width="26.5" height="27"><rect x="1.25" y="1.25" width="24" height="24.4" rx="5.2" fill="none" stroke="#444" stroke-width="2.5"/></svg>
<div style="position:absolute;left:-703px;width:1000px;text-align:right;top:1349.65px;font-size:25.3px;line-height:25.3px;font-weight:normal;color:#000;white-space:nowrap;">60</div>
<div style="position:absolute;left:322.5px;top:1349.65px;font-size:25.3px;line-height:25.3px;font-weight:normal;color:#000;white-space:nowrap;">Summer</div>
<div style="position:absolute;left:641.5px;top:1349.65px;font-size:25.3px;line-height:25.3px;font-weight:normal;color:#0b75d5;white-space:nowrap;text-decoration:underline;text-decoration-thickness:2px;text-underline-offset:8px;">Summer Session I</div>
<div style="position:absolute;left:1063.5px;top:1349.65px;font-size:25.3px;line-height:25.3px;font-weight:normal;color:#000;white-space:nowrap;">SUM 1</div>
<div style="position:absolute;left:386.29999999999995px;width:1000px;text-align:right;top:1349.65px;font-size:25.3px;line-height:25.3px;font-weight:normal;color:#000;white-space:nowrap;">06/05/17</div>
<div style="position:absolute;left:552.3px;width:1000px;text-align:right;top:1349.65px;font-size:25.3px;line-height:25.3px;font-weight:normal;color:#000;white-space:nowrap;">06/09/17</div>
<div style="position:absolute;left:1842px;top:1349.65px;font-size:25.3px;line-height:25.3px;font-weight:normal;color:#9a9a9a;white-space:nowrap;">No</div>
<div style="position:absolute;left:2376.5px;width:1000px;text-align:right;top:1349.65px;font-size:25.3px;line-height:25.3px;font-weight:normal;color:#000;white-space:nowrap;">60</div>
<div style="position:absolute;left:1691.30px;top:1349.47px;width:18.4px;height:18px;border:2px solid #cdcaca;border-radius:4.5px;"></div>
<div style="position:absolute;left:1776.30px;top:1349.47px;width:18.4px;height:18px;border:2px solid #cdcaca;border-radius:4.5px;"></div>
<div style="position:absolute;left:2035.30px;top:1349.47px;width:18.4px;height:18px;border:2px solid #cdcaca;border-radius:4.5px;"></div>
<svg style="position:absolute;left:2200.50px;top:1348.47px" width="23.5" height="24" viewBox="0 0 23.5 24"><rect x="0" y="0" width="23.5" height="24" rx="4.8" fill="#000"/><path d="M4.6 11.0 L9.6 15.9 L19.2 6.7" fill="none" stroke="#c3f7b6" stroke-width="4.2"/></svg>
<div style="position:absolute;left:2369.55px;top:1349.47px;width:18.4px;height:18px;border:2px solid #cdcaca;border-radius:4.5px;"></div>
<div style="position:absolute;left:2527.30px;top:1349.47px;width:18.4px;height:18px;border:2px solid #cdcaca;border-radius:4.5px;"></div>
<div style="position:absolute;left:2674.05px;top:1349.47px;width:18.4px;height:18px;border:2px solid #cdcaca;border-radius:4.5px;"></div>
<div style="position:absolute;left:2821.55px;top:1349.47px;width:18.4px;height:18px;border:2px solid #cdcaca;border-radius:4.5px;"></div>
<div style="position:absolute;left:2977.80px;top:1349.47px;width:18.4px;height:18px;border:2px solid #cdcaca;border-radius:4.5px;"></div>
<div style="position:absolute;left:3134.30px;top:1349.47px;width:18.4px;height:18px;border:2px solid #cdcaca;border-radius:4.5px;"></div>
<div style="position:absolute;left:0px;top:1394.335px;width:67px;height:63.46699999999987px;background:#e9e9e9;"></div>
<div style="position:absolute;left:0px;top:1456.002px;width:67px;height:1.8px;background:#c3c3c3;"></div>
<svg style="position:absolute;left:20.9px;top:1410.63px" width="26.5" height="27"><rect x="1.25" y="1.25" width="24" height="24.4" rx="5.2" fill="none" stroke="#444" stroke-width="2.5"/></svg>
<div style="position:absolute;left:-703px;width:1000px;text-align:right;top:1413.12px;font-size:25.3px;line-height:25.3px;font-weight:normal;color:#000;white-space:nowrap;">61</div>
<div style="position:absolute;left:322.5px;top:1413.12px;font-size:25.3px;line-height:25.3px;font-weight:normal;color:#000;white-space:nowrap;">Summer</div>
<div style="position:absolute;left:641.5px;top:1413.12px;font-size:25.3px;line-height:25.3px;font-weight:normal;color:#0b75d5;white-space:nowrap;text-decoration:underline;text-decoration-thickness:2px;text-underline-offset:8px;">Summer Session II</div>
<div style="position:absolute;left:1063.5px;top:1413.12px;font-size:25.3px;line-height:25.3px;font-weight:normal;color:#000;white-space:nowrap;">SUM 2</div>
<div style="position:absolute;left:386.29999999999995px;width:1000px;text-align:right;top:1413.12px;font-size:25.3px;line-height:25.3px;font-weight:normal;color:#000;white-space:nowrap;">06/12/17</div>
<div style="position:absolute;left:552.3px;width:1000px;text-align:right;top:1413.12px;font-size:25.3px;line-height:25.3px;font-weight:normal;color:#000;white-space:nowrap;">06/16/17</div>
<div style="position:absolute;left:1842px;top:1413.12px;font-size:25.3px;line-height:25.3px;font-weight:normal;color:#9a9a9a;white-space:nowrap;">No</div>
<div style="position:absolute;left:2376.5px;width:1000px;text-align:right;top:1413.12px;font-size:25.3px;line-height:25.3px;font-weight:normal;color:#000;white-space:nowrap;">61</div>
<div style="position:absolute;left:1691.30px;top:1412.93px;width:18.4px;height:18px;border:2px solid #cdcaca;border-radius:4.5px;"></div>
<div style="position:absolute;left:1776.30px;top:1412.93px;width:18.4px;height:18px;border:2px solid #cdcaca;border-radius:4.5px;"></div>
<div style="position:absolute;left:2035.30px;top:1412.93px;width:18.4px;height:18px;border:2px solid #cdcaca;border-radius:4.5px;"></div>
<svg style="position:absolute;left:2200.50px;top:1411.93px" width="23.5" height="24" viewBox="0 0 23.5 24"><rect x="0" y="0" width="23.5" height="24" rx="4.8" fill="#000"/><path d="M4.6 11.0 L9.6 15.9 L19.2 6.7" fill="none" stroke="#c3f7b6" stroke-width="4.2"/></svg>
<div style="position:absolute;left:2369.55px;top:1412.93px;width:18.4px;height:18px;border:2px solid #cdcaca;border-radius:4.5px;"></div>
<div style="position:absolute;left:2527.30px;top:1412.93px;width:18.4px;height:18px;border:2px solid #cdcaca;border-radius:4.5px;"></div>
<div style="position:absolute;left:2674.05px;top:1412.93px;width:18.4px;height:18px;border:2px solid #cdcaca;border-radius:4.5px;"></div>
<div style="position:absolute;left:2821.55px;top:1412.93px;width:18.4px;height:18px;border:2px solid #cdcaca;border-radius:4.5px;"></div>
<div style="position:absolute;left:2977.80px;top:1412.93px;width:18.4px;height:18px;border:2px solid #cdcaca;border-radius:4.5px;"></div>
<div style="position:absolute;left:3134.30px;top:1412.93px;width:18.4px;height:18px;border:2px solid #cdcaca;border-radius:4.5px;"></div>
<div style="position:absolute;left:0px;top:1457.802px;width:67px;height:63.4670000000001px;background:#e9e9e9;"></div>
<div style="position:absolute;left:0px;top:1519.469px;width:67px;height:1.8px;background:#c3c3c3;"></div>
<svg style="position:absolute;left:20.9px;top:1474.10px" width="26.5" height="27"><rect x="1.25" y="1.25" width="24" height="24.4" rx="5.2" fill="none" stroke="#444" stroke-width="2.5"/></svg>
<div style="position:absolute;left:-703px;width:1000px;text-align:right;top:1476.59px;font-size:25.3px;line-height:25.3px;font-weight:normal;color:#000;white-space:nowrap;">62</div>
<div style="position:absolute;left:322.5px;top:1476.59px;font-size:25.3px;line-height:25.3px;font-weight:normal;color:#000;white-space:nowrap;">Summer</div>
<div style="position:absolute;left:641.5px;top:1476.59px;font-size:25.3px;line-height:25.3px;font-weight:normal;color:#0b75d5;white-space:nowrap;text-decoration:underline;text-decoration-thickness:2px;text-underline-offset:8px;">Summer Session III</div>
<div style="position:absolute;left:1063.5px;top:1476.59px;font-size:25.3px;line-height:25.3px;font-weight:normal;color:#000;white-space:nowrap;">SUM 3</div>
<div style="position:absolute;left:386.29999999999995px;width:1000px;text-align:right;top:1476.59px;font-size:25.3px;line-height:25.3px;font-weight:normal;color:#000;white-space:nowrap;">06/19/17</div>
<div style="position:absolute;left:552.3px;width:1000px;text-align:right;top:1476.59px;font-size:25.3px;line-height:25.3px;font-weight:normal;color:#000;white-space:nowrap;">06/23/17</div>
<div style="position:absolute;left:1842px;top:1476.59px;font-size:25.3px;line-height:25.3px;font-weight:normal;color:#9a9a9a;white-space:nowrap;">No</div>
<div style="position:absolute;left:2376.5px;width:1000px;text-align:right;top:1476.59px;font-size:25.3px;line-height:25.3px;font-weight:normal;color:#000;white-space:nowrap;">62</div>
<div style="position:absolute;left:1691.30px;top:1476.40px;width:18.4px;height:18px;border:2px solid #cdcaca;border-radius:4.5px;"></div>
<div style="position:absolute;left:1776.30px;top:1476.40px;width:18.4px;height:18px;border:2px solid #cdcaca;border-radius:4.5px;"></div>
<div style="position:absolute;left:2035.30px;top:1476.40px;width:18.4px;height:18px;border:2px solid #cdcaca;border-radius:4.5px;"></div>
<svg style="position:absolute;left:2200.50px;top:1475.40px" width="23.5" height="24" viewBox="0 0 23.5 24"><rect x="0" y="0" width="23.5" height="24" rx="4.8" fill="#000"/><path d="M4.6 11.0 L9.6 15.9 L19.2 6.7" fill="none" stroke="#c3f7b6" stroke-width="4.2"/></svg>
<div style="position:absolute;left:2369.55px;top:1476.40px;width:18.4px;height:18px;border:2px solid #cdcaca;border-radius:4.5px;"></div>
<div style="position:absolute;left:2527.30px;top:1476.40px;width:18.4px;height:18px;border:2px solid #cdcaca;border-radius:4.5px;"></div>
<div style="position:absolute;left:2674.05px;top:1476.40px;width:18.4px;height:18px;border:2px solid #cdcaca;border-radius:4.5px;"></div>
<div style="position:absolute;left:2821.55px;top:1476.40px;width:18.4px;height:18px;border:2px solid #cdcaca;border-radius:4.5px;"></div>
<div style="position:absolute;left:2977.80px;top:1476.40px;width:18.4px;height:18px;border:2px solid #cdcaca;border-radius:4.5px;"></div>
<div style="position:absolute;left:3134.30px;top:1476.40px;width:18.4px;height:18px;border:2px solid #cdcaca;border-radius:4.5px;"></div>
<div style="position:absolute;left:0px;top:1521.269px;width:67px;height:63.46699999999987px;background:#e9e9e9;"></div>
<div style="position:absolute;left:0px;top:1582.936px;width:67px;height:1.8px;background:#c3c3c3;"></div>
<svg style="position:absolute;left:20.9px;top:1537.57px" width="26.5" height="27"><rect x="1.25" y="1.25" width="24" height="24.4" rx="5.2" fill="none" stroke="#444" stroke-width="2.5"/></svg>
<div style="position:absolute;left:-703px;width:1000px;text-align:right;top:1540.05px;font-size:25.3px;line-height:25.3px;font-weight:normal;color:#000;white-space:nowrap;">63</div>
<div style="position:absolute;left:322.5px;top:1540.05px;font-size:25.3px;line-height:25.3px;font-weight:normal;color:#000;white-space:nowrap;">Summer</div>
<div style="position:absolute;left:641.5px;top:1540.05px;font-size:25.3px;line-height:25.3px;font-weight:normal;color:#0b75d5;white-space:nowrap;text-decoration:underline;text-decoration-thickness:2px;text-underline-offset:8px;">Summer Session IV</div>
<div style="position:absolute;left:1063.5px;top:1540.05px;font-size:25.3px;line-height:25.3px;font-weight:normal;color:#000;white-space:nowrap;">SUM 4</div>
<div style="position:absolute;left:386.29999999999995px;width:1000px;text-align:right;top:1540.05px;font-size:25.3px;line-height:25.3px;font-weight:normal;color:#000;white-space:nowrap;">06/26/17</div>
<div style="position:absolute;left:552.3px;width:1000px;text-align:right;top:1540.05px;font-size:25.3px;line-height:25.3px;font-weight:normal;color:#000;white-space:nowrap;">06/30/17</div>
<div style="position:absolute;left:1842px;top:1540.05px;font-size:25.3px;line-height:25.3px;font-weight:normal;color:#9a9a9a;white-space:nowrap;">No</div>
<div style="position:absolute;left:2376.5px;width:1000px;text-align:right;top:1540.05px;font-size:25.3px;line-height:25.3px;font-weight:normal;color:#000;white-space:nowrap;">63</div>
<div style="position:absolute;left:1691.30px;top:1539.87px;width:18.4px;height:18px;border:2px solid #cdcaca;border-radius:4.5px;"></div>
<div style="position:absolute;left:1776.30px;top:1539.87px;width:18.4px;height:18px;border:2px solid #cdcaca;border-radius:4.5px;"></div>
<div style="position:absolute;left:2035.30px;top:1539.87px;width:18.4px;height:18px;border:2px solid #cdcaca;border-radius:4.5px;"></div>
<svg style="position:absolute;left:2200.50px;top:1538.87px" width="23.5" height="24" viewBox="0 0 23.5 24"><rect x="0" y="0" width="23.5" height="24" rx="4.8" fill="#000"/><path d="M4.6 11.0 L9.6 15.9 L19.2 6.7" fill="none" stroke="#c3f7b6" stroke-width="4.2"/></svg>
<div style="position:absolute;left:2369.55px;top:1539.87px;width:18.4px;height:18px;border:2px solid #cdcaca;border-radius:4.5px;"></div>
<div style="position:absolute;left:2527.30px;top:1539.87px;width:18.4px;height:18px;border:2px solid #cdcaca;border-radius:4.5px;"></div>
<div style="position:absolute;left:2674.05px;top:1539.87px;width:18.4px;height:18px;border:2px solid #cdcaca;border-radius:4.5px;"></div>
<div style="position:absolute;left:2821.55px;top:1539.87px;width:18.4px;height:18px;border:2px solid #cdcaca;border-radius:4.5px;"></div>
<div style="position:absolute;left:2977.80px;top:1539.87px;width:18.4px;height:18px;border:2px solid #cdcaca;border-radius:4.5px;"></div>
<div style="position:absolute;left:3134.30px;top:1539.87px;width:18.4px;height:18px;border:2px solid #cdcaca;border-radius:4.5px;"></div>
<div style="position:absolute;left:0px;top:1584.7359999999999px;width:67px;height:63.4670000000001px;background:#e9e9e9;"></div>
<div style="position:absolute;left:0px;top:1646.403px;width:67px;height:1.8px;background:#c3c3c3;"></div>
<svg style="position:absolute;left:20.9px;top:1601.04px" width="26.5" height="27"><rect x="1.25" y="1.25" width="24" height="24.4" rx="5.2" fill="none" stroke="#444" stroke-width="2.5"/></svg>
<div style="position:absolute;left:-703px;width:1000px;text-align:right;top:1603.52px;font-size:25.3px;line-height:25.3px;font-weight:normal;color:#000;white-space:nowrap;">80</div>
<div style="position:absolute;left:322.5px;top:1603.52px;font-size:25.3px;line-height:25.3px;font-weight:normal;color:#000;white-space:nowrap;">Summer</div>
<div style="position:absolute;left:641.5px;top:1603.52px;font-size:25.3px;line-height:25.3px;font-weight:normal;color:#0b75d5;white-space:nowrap;text-decoration:underline;text-decoration-thickness:2px;text-underline-offset:8px;">Summer ALL</div>
<div style="position:absolute;left:1063.5px;top:1603.52px;font-size:25.3px;line-height:25.3px;font-weight:normal;color:#000;white-space:nowrap;">ALLSUM</div>
<div style="position:absolute;left:386.29999999999995px;width:1000px;text-align:right;top:1603.52px;font-size:25.3px;line-height:25.3px;font-weight:normal;color:#000;white-space:nowrap;">06/05/17</div>
<div style="position:absolute;left:552.3px;width:1000px;text-align:right;top:1603.52px;font-size:25.3px;line-height:25.3px;font-weight:normal;color:#000;white-space:nowrap;">06/30/17</div>
<div style="position:absolute;left:1842px;top:1603.52px;font-size:25.3px;line-height:25.3px;font-weight:normal;color:#9a9a9a;white-space:nowrap;">No</div>
<div style="position:absolute;left:2376.5px;width:1000px;text-align:right;top:1603.52px;font-size:25.3px;line-height:25.3px;font-weight:normal;color:#000;white-space:nowrap;">64</div>
<div style="position:absolute;left:1691.30px;top:1603.34px;width:18.4px;height:18px;border:2px solid #cdcaca;border-radius:4.5px;"></div>
<div style="position:absolute;left:1776.30px;top:1603.34px;width:18.4px;height:18px;border:2px solid #cdcaca;border-radius:4.5px;"></div>
<div style="position:absolute;left:2035.30px;top:1603.34px;width:18.4px;height:18px;border:2px solid #cdcaca;border-radius:4.5px;"></div>
<svg style="position:absolute;left:2200.50px;top:1602.34px" width="23.5" height="24" viewBox="0 0 23.5 24"><rect x="0" y="0" width="23.5" height="24" rx="4.8" fill="#000"/><path d="M4.6 11.0 L9.6 15.9 L19.2 6.7" fill="none" stroke="#c3f7b6" stroke-width="4.2"/></svg>
<div style="position:absolute;left:2369.55px;top:1603.34px;width:18.4px;height:18px;border:2px solid #cdcaca;border-radius:4.5px;"></div>
<div style="position:absolute;left:2527.30px;top:1603.34px;width:18.4px;height:18px;border:2px solid #cdcaca;border-radius:4.5px;"></div>
<div style="position:absolute;left:2674.05px;top:1603.34px;width:18.4px;height:18px;border:2px solid #cdcaca;border-radius:4.5px;"></div>
<div style="position:absolute;left:2821.55px;top:1603.34px;width:18.4px;height:18px;border:2px solid #cdcaca;border-radius:4.5px;"></div>
<div style="position:absolute;left:2977.80px;top:1603.34px;width:18.4px;height:18px;border:2px solid #cdcaca;border-radius:4.5px;"></div>
<div style="position:absolute;left:3134.30px;top:1603.34px;width:18.4px;height:18px;border:2px solid #cdcaca;border-radius:4.5px;"></div>
<div style="position:absolute;left:0px;top:1648.203px;width:67px;height:63.46699999999987px;background:#e9e9e9;"></div>
<div style="position:absolute;left:0px;top:1709.87px;width:67px;height:1.8px;background:#c3c3c3;"></div>
<svg style="position:absolute;left:20.9px;top:1664.50px" width="26.5" height="27"><rect x="1.25" y="1.25" width="24" height="24.4" rx="5.2" fill="none" stroke="#444" stroke-width="2.5"/></svg>
<div style="position:absolute;left:67px;top:1648.203px;width:3749px;height:63.46699999999987px;background:#ededed;"></div>
<div style="position:absolute;left:67px;top:1709.6699999999998px;width:3749px;height:2px;background:#a9a9a9;"></div>
<div style="position:absolute;left:3815px;top:1648.203px;width:2px;height:61.46699999999987px;background:repeating-linear-gradient(to bottom, rgba(0,0,0,0.2) 0px, rgba(0,0,0,0.2) 2px, transparent 2px, transparent 4px);"></div>
<svg style="position:absolute;left:90px;top:1669.10px" width="18" height="18"><polygon points="17,0 17,16.8 0.2,16.8" fill="#3a3a3a"/></svg>
<div style="position:absolute;left:128px;top:1664.32px;font-size:30.7px;line-height:30.7px;font-weight:bold;color:#000;white-space:nowrap;">Semesters</div>
<svg style="position:absolute;left:1074.5px;top:1669.10px" width="18" height="18"><polygon points="17,0 17,16.8 0.2,16.8" fill="#3a3a3a"/></svg>
<div style="position:absolute;left:1112.5px;top:1664.32px;font-size:30.7px;line-height:30.7px;font-weight:bold;color:#000;white-space:nowrap;">Semesters</div>
<div style="position:absolute;left:306.31744px;top:1669.14px;font-size:25px;line-height:25px;font-weight:normal;color:#9a9a9a;white-space:nowrap;">(4 records)</div>
<div style="position:absolute;left:1290.81744px;top:1669.14px;font-size:25px;line-height:25px;font-weight:normal;color:#9a9a9a;white-space:nowrap;">(4 records)</div>
<div style="position:absolute;left:0px;top:1711.6699999999998px;width:67px;height:63.4670000000001px;background:#e9e9e9;"></div>
<div style="position:absolute;left:0px;top:1773.337px;width:67px;height:1.8px;background:#c3c3c3;"></div>
<svg style="position:absolute;left:20.9px;top:1727.97px" width="26.5" height="27"><rect x="1.25" y="1.25" width="24" height="24.4" rx="5.2" fill="none" stroke="#444" stroke-width="2.5"/></svg>
<div style="position:absolute;left:-703px;width:1000px;text-align:right;top:1730.45px;font-size:25.3px;line-height:25.3px;font-weight:normal;color:#000;white-space:nowrap;">40</div>
<div style="position:absolute;left:322.5px;top:1730.45px;font-size:25.3px;line-height:25.3px;font-weight:normal;color:#000;white-space:nowrap;">Semesters</div>
<div style="position:absolute;left:641.5px;top:1730.45px;font-size:25.3px;line-height:25.3px;font-weight:normal;color:#0b75d5;white-space:nowrap;text-decoration:underline;text-decoration-thickness:2px;text-underline-offset:8px;">Mid Semester 1</div>
<div style="position:absolute;left:1063.5px;top:1730.45px;font-size:25.3px;line-height:25.3px;font-weight:normal;color:#000;white-space:nowrap;">MS1</div>
<div style="position:absolute;left:386.29999999999995px;width:1000px;text-align:right;top:1730.45px;font-size:25.3px;line-height:25.3px;font-weight:normal;color:#000;white-space:nowrap;">08/18/16</div>
<div style="position:absolute;left:552.3px;width:1000px;text-align:right;top:1730.45px;font-size:25.3px;line-height:25.3px;font-weight:normal;color:#000;white-space:nowrap;">10/21/16</div>
<div style="position:absolute;left:646.5px;width:1000px;text-align:right;top:1730.45px;font-size:25.3px;line-height:25.3px;font-weight:normal;color:#000;white-space:nowrap;">43</div>
<div style="position:absolute;left:1842px;top:1730.45px;font-size:25.3px;line-height:25.3px;font-weight:normal;color:#000;white-space:nowrap;">Yes</div>
<div style="position:absolute;left:2376.5px;width:1000px;text-align:right;top:1730.45px;font-size:25.3px;line-height:25.3px;font-weight:normal;color:#000;white-space:nowrap;">40</div>
<div style="position:absolute;left:1691.30px;top:1730.27px;width:18.4px;height:18px;border:2px solid #cdcaca;border-radius:4.5px;"></div>
<div style="position:absolute;left:1776.30px;top:1730.27px;width:18.4px;height:18px;border:2px solid #cdcaca;border-radius:4.5px;"></div>
<div style="position:absolute;left:2035.30px;top:1730.27px;width:18.4px;height:18px;border:2px solid #cdcaca;border-radius:4.5px;"></div>
<svg style="position:absolute;left:2200.50px;top:1729.27px" width="23.5" height="24" viewBox="0 0 23.5 24"><rect x="0" y="0" width="23.5" height="24" rx="4.8" fill="#000"/><path d="M4.6 11.0 L9.6 15.9 L19.2 6.7" fill="none" stroke="#c3f7b6" stroke-width="4.2"/></svg>
<svg style="position:absolute;left:2369.00px;top:1729.27px" width="23.5" height="24" viewBox="0 0 23.5 24"><rect x="0" y="0" width="23.5" height="24" rx="4.8" fill="#000"/><path d="M4.6 11.0 L9.6 15.9 L19.2 6.7" fill="none" stroke="#c3f7b6" stroke-width="4.2"/></svg>
<div style="position:absolute;left:2527.30px;top:1730.27px;width:18.4px;height:18px;border:2px solid #cdcaca;border-radius:4.5px;"></div>
<div style="position:absolute;left:2674.05px;top:1730.27px;width:18.4px;height:18px;border:2px solid #cdcaca;border-radius:4.5px;"></div>
<div style="position:absolute;left:2821.55px;top:1730.27px;width:18.4px;height:18px;border:2px solid #cdcaca;border-radius:4.5px;"></div>
<div style="position:absolute;left:2977.80px;top:1730.27px;width:18.4px;height:18px;border:2px solid #cdcaca;border-radius:4.5px;"></div>
<div style="position:absolute;left:3134.30px;top:1730.27px;width:18.4px;height:18px;border:2px solid #cdcaca;border-radius:4.5px;"></div>
<div style="position:absolute;left:0px;top:1775.137px;width:67px;height:63.46699999999987px;background:#e9e9e9;"></div>
<div style="position:absolute;left:0px;top:1836.8039999999999px;width:67px;height:1.8px;background:#c3c3c3;"></div>
<svg style="position:absolute;left:20.9px;top:1791.44px" width="26.5" height="27"><rect x="1.25" y="1.25" width="24" height="24.4" rx="5.2" fill="none" stroke="#444" stroke-width="2.5"/></svg>
<div style="position:absolute;left:-703px;width:1000px;text-align:right;top:1793.92px;font-size:25.3px;line-height:25.3px;font-weight:normal;color:#000;white-space:nowrap;">41</div>
<div style="position:absolute;left:322.5px;top:1793.92px;font-size:25.3px;line-height:25.3px;font-weight:normal;color:#000;white-space:nowrap;">Semesters</div>
<div style="position:absolute;left:641.5px;top:1793.92px;font-size:25.3px;line-height:25.3px;font-weight:normal;color:#0b75d5;white-space:nowrap;text-decoration:underline;text-decoration-thickness:2px;text-underline-offset:8px;">Semester 1</div>
<div style="position:absolute;left:1063.5px;top:1793.92px;font-size:25.3px;line-height:25.3px;font-weight:normal;color:#000;white-space:nowrap;">S1</div>
<div style="position:absolute;left:386.29999999999995px;width:1000px;text-align:right;top:1793.92px;font-size:25.3px;line-height:25.3px;font-weight:normal;color:#000;white-space:nowrap;">08/18/16</div>
<div style="position:absolute;left:552.3px;width:1000px;text-align:right;top:1793.92px;font-size:25.3px;line-height:25.3px;font-weight:normal;color:#000;white-space:nowrap;">01/12/17</div>
<div style="position:absolute;left:646.5px;width:1000px;text-align:right;top:1793.92px;font-size:25.3px;line-height:25.3px;font-weight:normal;color:#000;white-space:nowrap;">72</div>
<div style="position:absolute;left:1842px;top:1793.92px;font-size:25.3px;line-height:25.3px;font-weight:normal;color:#000;white-space:nowrap;">Yes</div>
<div style="position:absolute;left:2376.5px;width:1000px;text-align:right;top:1793.92px;font-size:25.3px;line-height:25.3px;font-weight:normal;color:#000;white-space:nowrap;">41</div>
<svg style="position:absolute;left:1690.75px;top:1792.74px" width="23.5" height="24" viewBox="0 0 23.5 24"><rect x="0" y="0" width="23.5" height="24" rx="4.8" fill="#000"/><path d="M4.6 11.0 L9.6 15.9 L19.2 6.7" fill="none" stroke="#f8f8f8" stroke-width="4.2"/></svg>
<svg style="position:absolute;left:1775.75px;top:1792.74px" width="23.5" height="24" viewBox="0 0 23.5 24"><rect x="0" y="0" width="23.5" height="24" rx="4.8" fill="#000"/><path d="M4.6 11.0 L9.6 15.9 L19.2 6.7" fill="none" stroke="#f8f8f8" stroke-width="4.2"/></svg>
<svg style="position:absolute;left:2034.75px;top:1792.74px" width="23.5" height="24" viewBox="0 0 23.5 24"><rect x="0" y="0" width="23.5" height="24" rx="4.8" fill="#000"/><path d="M4.6 11.0 L9.6 15.9 L19.2 6.7" fill="none" stroke="#c3f7b6" stroke-width="4.2"/></svg>
<svg style="position:absolute;left:2200.50px;top:1792.74px" width="23.5" height="24" viewBox="0 0 23.5 24"><rect x="0" y="0" width="23.5" height="24" rx="4.8" fill="#000"/><path d="M4.6 11.0 L9.6 15.9 L19.2 6.7" fill="none" stroke="#c3f7b6" stroke-width="4.2"/></svg>
<svg style="position:absolute;left:2369.00px;top:1792.74px" width="23.5" height="24" viewBox="0 0 23.5 24"><rect x="0" y="0" width="23.5" height="24" rx="4.8" fill="#000"/><path d="M4.6 11.0 L9.6 15.9 L19.2 6.7" fill="none" stroke="#c3f7b6" stroke-width="4.2"/></svg>
<svg style="position:absolute;left:2526.75px;top:1792.74px" width="23.5" height="24" viewBox="0 0 23.5 24"><rect x="0" y="0" width="23.5" height="24" rx="4.8" fill="#000"/><path d="M4.6 11.0 L9.6 15.9 L19.2 6.7" fill="none" stroke="#bbe3f8" stroke-width="4.2"/></svg>
<svg style="position:absolute;left:2673.50px;top:1792.74px" width="23.5" height="24" viewBox="0 0 23.5 24"><rect x="0" y="0" width="23.5" height="24" rx="4.8" fill="#000"/><path d="M4.6 11.0 L9.6 15.9 L19.2 6.7" fill="none" stroke="#bbe3f8" stroke-width="4.2"/></svg>
<svg style="position:absolute;left:2821.00px;top:1792.74px" width="23.5" height="24" viewBox="0 0 23.5 24"><rect x="0" y="0" width="23.5" height="24" rx="4.8" fill="#000"/><path d="M4.6 11.0 L9.6 15.9 L19.2 6.7" fill="none" stroke="#bbe3f8" stroke-width="4.2"/></svg>
<svg style="position:absolute;left:2977.25px;top:1792.74px" width="23.5" height="24" viewBox="0 0 23.5 24"><rect x="0" y="0" width="23.5" height="24" rx="4.8" fill="#000"/><path d="M4.6 11.0 L9.6 15.9 L19.2 6.7" fill="none" stroke="#bbe3f8" stroke-width="4.2"/></svg>
<svg style="position:absolute;left:3133.75px;top:1792.74px" width="23.5" height="24" viewBox="0 0 23.5 24"><rect x="0" y="0" width="23.5" height="24" rx="4.8" fill="#000"/><path d="M4.6 11.0 L9.6 15.9 L19.2 6.7" fill="none" stroke="#bbe3f8" stroke-width="4.2"/></svg>
<div style="position:absolute;left:0px;top:1838.6039999999998px;width:67px;height:63.4670000000001px;background:#e9e9e9;"></div>
<div style="position:absolute;left:0px;top:1900.271px;width:67px;height:1.8px;background:#c3c3c3;"></div>
<svg style="position:absolute;left:20.9px;top:1854.90px" width="26.5" height="27"><rect x="1.25" y="1.25" width="24" height="24.4" rx="5.2" fill="none" stroke="#444" stroke-width="2.5"/></svg>
<div style="position:absolute;left:-703px;width:1000px;text-align:right;top:1857.39px;font-size:25.3px;line-height:25.3px;font-weight:normal;color:#000;white-space:nowrap;">42</div>
<div style="position:absolute;left:322.5px;top:1857.39px;font-size:25.3px;line-height:25.3px;font-weight:normal;color:#000;white-space:nowrap;">Semesters</div>
<div style="position:absolute;left:641.5px;top:1857.39px;font-size:25.3px;line-height:25.3px;font-weight:normal;color:#0b75d5;white-space:nowrap;text-decoration:underline;text-decoration-thickness:2px;text-underline-offset:8px;">Mid Semester 2</div>
<div style="position:absolute;left:1063.5px;top:1857.39px;font-size:25.3px;line-height:25.3px;font-weight:normal;color:#000;white-space:nowrap;">MS2</div>
<div style="position:absolute;left:386.29999999999995px;width:1000px;text-align:right;top:1857.39px;font-size:25.3px;line-height:25.3px;font-weight:normal;color:#000;white-space:nowrap;">01/13/17</div>
<div style="position:absolute;left:552.3px;width:1000px;text-align:right;top:1857.39px;font-size:25.3px;line-height:25.3px;font-weight:normal;color:#000;white-space:nowrap;">03/23/17</div>
<div style="position:absolute;left:646.5px;width:1000px;text-align:right;top:1857.39px;font-size:25.3px;line-height:25.3px;font-weight:normal;color:#000;white-space:nowrap;">44</div>
<div style="position:absolute;left:1842px;top:1857.39px;font-size:25.3px;line-height:25.3px;font-weight:normal;color:#000;white-space:nowrap;">Yes</div>
<div style="position:absolute;left:2376.5px;width:1000px;text-align:right;top:1857.39px;font-size:25.3px;line-height:25.3px;font-weight:normal;color:#000;white-space:nowrap;">42</div>
<div style="position:absolute;left:1691.30px;top:1857.20px;width:18.4px;height:18px;border:2px solid #cdcaca;border-radius:4.5px;"></div>
<div style="position:absolute;left:1776.30px;top:1857.20px;width:18.4px;height:18px;border:2px solid #cdcaca;border-radius:4.5px;"></div>
<svg style="position:absolute;left:2034.75px;top:1856.20px" width="23.5" height="24" viewBox="0 0 23.5 24"><rect x="0" y="0" width="23.5" height="24" rx="4.8" fill="#000"/><path d="M4.6 11.0 L9.6 15.9 L19.2 6.7" fill="none" stroke="#c3f7b6" stroke-width="4.2"/></svg>
<svg style="position:absolute;left:2200.50px;top:1856.20px" width="23.5" height="24" viewBox="0 0 23.5 24"><rect x="0" y="0" width="23.5" height="24" rx="4.8" fill="#000"/><path d="M4.6 11.0 L9.6 15.9 L19.2 6.7" fill="none" stroke="#c3f7b6" stroke-width="4.2"/></svg>
<svg style="position:absolute;left:2369.00px;top:1856.20px" width="23.5" height="24" viewBox="0 0 23.5 24"><rect x="0" y="0" width="23.5" height="24" rx="4.8" fill="#000"/><path d="M4.6 11.0 L9.6 15.9 L19.2 6.7" fill="none" stroke="#c3f7b6" stroke-width="4.2"/></svg>
<div style="position:absolute;left:2527.30px;top:1857.20px;width:18.4px;height:18px;border:2px solid #cdcaca;border-radius:4.5px;"></div>
<div style="position:absolute;left:2674.05px;top:1857.20px;width:18.4px;height:18px;border:2px solid #cdcaca;border-radius:4.5px;"></div>
<div style="position:absolute;left:2821.55px;top:1857.20px;width:18.4px;height:18px;border:2px solid #cdcaca;border-radius:4.5px;"></div>
<div style="position:absolute;left:2977.80px;top:1857.20px;width:18.4px;height:18px;border:2px solid #cdcaca;border-radius:4.5px;"></div>
<div style="position:absolute;left:3134.30px;top:1857.20px;width:18.4px;height:18px;border:2px solid #cdcaca;border-radius:4.5px;"></div>
<div style="position:absolute;left:0px;top:1902.071px;width:67px;height:63.4670000000001px;background:#e9e9e9;"></div>
<div style="position:absolute;left:0px;top:1963.738px;width:67px;height:1.8px;background:#c3c3c3;"></div>
<svg style="position:absolute;left:20.9px;top:1918.37px" width="26.5" height="27"><rect x="1.25" y="1.25" width="24" height="24.4" rx="5.2" fill="none" stroke="#444" stroke-width="2.5"/></svg>
<div style="position:absolute;left:-703px;width:1000px;text-align:right;top:1920.85px;font-size:25.3px;line-height:25.3px;font-weight:normal;color:#000;white-space:nowrap;">43</div>
<div style="position:absolute;left:322.5px;top:1920.85px;font-size:25.3px;line-height:25.3px;font-weight:normal;color:#000;white-space:nowrap;">Semesters</div>
<div style="position:absolute;left:641.5px;top:1920.85px;font-size:25.3px;line-height:25.3px;font-weight:normal;color:#0b75d5;white-space:nowrap;text-decoration:underline;text-decoration-thickness:2px;text-underline-offset:8px;">Semester 2</div>
<div style="position:absolute;left:1063.5px;top:1920.85px;font-size:25.3px;line-height:25.3px;font-weight:normal;color:#000;white-space:nowrap;">S2</div>
<div style="position:absolute;left:386.29999999999995px;width:1000px;text-align:right;top:1920.85px;font-size:25.3px;line-height:25.3px;font-weight:normal;color:#000;white-space:nowrap;">01/13/17</div>
<div style="position:absolute;left:552.3px;width:1000px;text-align:right;top:1920.85px;font-size:25.3px;line-height:25.3px;font-weight:normal;color:#000;white-space:nowrap;">06/02/17</div>
<div style="position:absolute;left:646.5px;width:1000px;text-align:right;top:1920.85px;font-size:25.3px;line-height:25.3px;font-weight:normal;color:#000;white-space:nowrap;">90</div>
<div style="position:absolute;left:1842px;top:1920.85px;font-size:25.3px;line-height:25.3px;font-weight:normal;color:#000;white-space:nowrap;">Yes</div>
<div style="position:absolute;left:2376.5px;width:1000px;text-align:right;top:1920.85px;font-size:25.3px;line-height:25.3px;font-weight:normal;color:#000;white-space:nowrap;">43</div>
<svg style="position:absolute;left:1690.75px;top:1919.67px" width="23.5" height="24" viewBox="0 0 23.5 24"><rect x="0" y="0" width="23.5" height="24" rx="4.8" fill="#000"/><path d="M4.6 11.0 L9.6 15.9 L19.2 6.7" fill="none" stroke="#f8f8f8" stroke-width="4.2"/></svg>
<svg style="position:absolute;left:1775.75px;top:1919.67px" width="23.5" height="24" viewBox="0 0 23.5 24"><rect x="0" y="0" width="23.5" height="24" rx="4.8" fill="#000"/><path d="M4.6 11.0 L9.6 15.9 L19.2 6.7" fill="none" stroke="#f8f8f8" stroke-width="4.2"/></svg>
<svg style="position:absolute;left:2034.75px;top:1919.67px" width="23.5" height="24" viewBox="0 0 23.5 24"><rect x="0" y="0" width="23.5" height="24" rx="4.8" fill="#000"/><path d="M4.6 11.0 L9.6 15.9 L19.2 6.7" fill="none" stroke="#c3f7b6" stroke-width="4.2"/></svg>
<svg style="position:absolute;left:2200.50px;top:1919.67px" width="23.5" height="24" viewBox="0 0 23.5 24"><rect x="0" y="0" width="23.5" height="24" rx="4.8" fill="#000"/><path d="M4.6 11.0 L9.6 15.9 L19.2 6.7" fill="none" stroke="#c3f7b6" stroke-width="4.2"/></svg>
<svg style="position:absolute;left:2369.00px;top:1919.67px" width="23.5" height="24" viewBox="0 0 23.5 24"><rect x="0" y="0" width="23.5" height="24" rx="4.8" fill="#000"/><path d="M4.6 11.0 L9.6 15.9 L19.2 6.7" fill="none" stroke="#c3f7b6" stroke-width="4.2"/></svg>
<svg style="position:absolute;left:2526.75px;top:1919.67px" width="23.5" height="24" viewBox="0 0 23.5 24"><rect x="0" y="0" width="23.5" height="24" rx="4.8" fill="#000"/><path d="M4.6 11.0 L9.6 15.9 L19.2 6.7" fill="none" stroke="#bbe3f8" stroke-width="4.2"/></svg>
<svg style="position:absolute;left:2673.50px;top:1919.67px" width="23.5" height="24" viewBox="0 0 23.5 24"><rect x="0" y="0" width="23.5" height="24" rx="4.8" fill="#000"/><path d="M4.6 11.0 L9.6 15.9 L19.2 6.7" fill="none" stroke="#bbe3f8" stroke-width="4.2"/></svg>
<svg style="position:absolute;left:2821.00px;top:1919.67px" width="23.5" height="24" viewBox="0 0 23.5 24"><rect x="0" y="0" width="23.5" height="24" rx="4.8" fill="#000"/><path d="M4.6 11.0 L9.6 15.9 L19.2 6.7" fill="none" stroke="#bbe3f8" stroke-width="4.2"/></svg>
<svg style="position:absolute;left:2977.25px;top:1919.67px" width="23.5" height="24" viewBox="0 0 23.5 24"><rect x="0" y="0" width="23.5" height="24" rx="4.8" fill="#000"/><path d="M4.6 11.0 L9.6 15.9 L19.2 6.7" fill="none" stroke="#bbe3f8" stroke-width="4.2"/></svg>
<svg style="position:absolute;left:3133.75px;top:1919.67px" width="23.5" height="24" viewBox="0 0 23.5 24"><rect x="0" y="0" width="23.5" height="24" rx="4.8" fill="#000"/><path d="M4.6 11.0 L9.6 15.9 L19.2 6.7" fill="none" stroke="#bbe3f8" stroke-width="4.2"/></svg>
<div style="position:absolute;left:66.25px;top:443px;width:1.75px;height:1500px;background:#c4c4c4;"></div>
<div style="position:absolute;left:68px;top:443px;width:977.7px;height:57px;border:2px solid #2f78e6;"></div>
<div style="position:absolute;left:1052.3px;top:443px;width:2758px;height:57px;border:2px solid #2f78e6;"></div>
</div>
<div style="position:absolute;left:1049.7px;top:248.5px;width:2.6px;height:1690px;background:#000;"></div>
<div style="position:absolute;left:0px;top:246.5px;width:2px;height:1736px;background:#c8c8c8;"></div>
<div style="position:absolute;left:0px;top:1937.8px;width:3840px;height:2px;background:#cccccc;"></div>
<div style="position:absolute;left:2px;top:1939.8px;width:3838px;height:43px;background:#e9e9e9;"></div>
<svg style="position:absolute;left:3665px;top:1947px" width="32" height="28" viewBox="0 0 32 28"><defs><clipPath id="fc"><path d="M6.8 6.5 C10.5 3.5 14 3.5 17.8 5.5 C21.5 7.5 25 7.5 29 5 L29 18.5 C25 21 21.5 21 17.8 19 C14 17 10.5 17 6.8 20 Z"/></clipPath></defs><rect x="3" y="3" width="2.3" height="23" fill="#6e6e6e"/><circle cx="4.2" cy="3.2" r="2" fill="#6e6e6e"/><g clip-path="url(#fc)"><rect x="0" y="0" width="32" height="28" fill="#fff"/><g fill="#6e6e6e" transform="skewY(-8) translate(0,3)"><rect x="14" y="3" width="8" height="5"/><rect x="6" y="8" width="8" height="5"/><rect x="22" y="8" width="8" height="5"/><rect x="14" y="13" width="8" height="5"/></g></g><path d="M6.8 6.5 C10.5 3.5 14 3.5 17.8 5.5 C21.5 7.5 25 7.5 29 5 L29 18.5 C25 21 21.5 21 17.8 19 C14 17 10.5 17 6.8 20 Z" fill="none" stroke="#6e6e6e" stroke-width="1.8"/></svg>
<div style="position:absolute;left:2824px;width:1000px;text-align:right;top:1949.44px;font-size:25px;line-height:25px;font-weight:normal;color:#222;white-space:nowrap;">20 records</div>
<div style="position:absolute;left:3816px;top:248.5px;width:24px;height:1690px;background:#f1f1f1;"></div>
<div style="position:absolute;left:3838px;top:248.5px;width:2px;height:1690px;background:#d0d0d0;"></div>
<svg style="position:absolute;left:3822px;top:255px" width="12" height="8"><polygon points="0.5,7 10.5,7 5.5,1.5" fill="#888"/></svg>
<div style="position:absolute;left:3819px;top:269px;width:17px;height:1621.5px;background:#c1c1c1;"></div>
<svg style="position:absolute;left:3822px;top:1923px" width="12" height="8"><polygon points="0.5,1 10.5,1 5.5,6.5" fill="#666"/></svg>
<div style="position:absolute;left:1657px;top:301px;width:156.8px;height:1628px;border:10px solid #fb4343;box-shadow:0 3px 6px rgba(0,0,0,0.45), inset 0 3px 6px rgba(0,0,0,0.45);"></div>
</div></body></html>
